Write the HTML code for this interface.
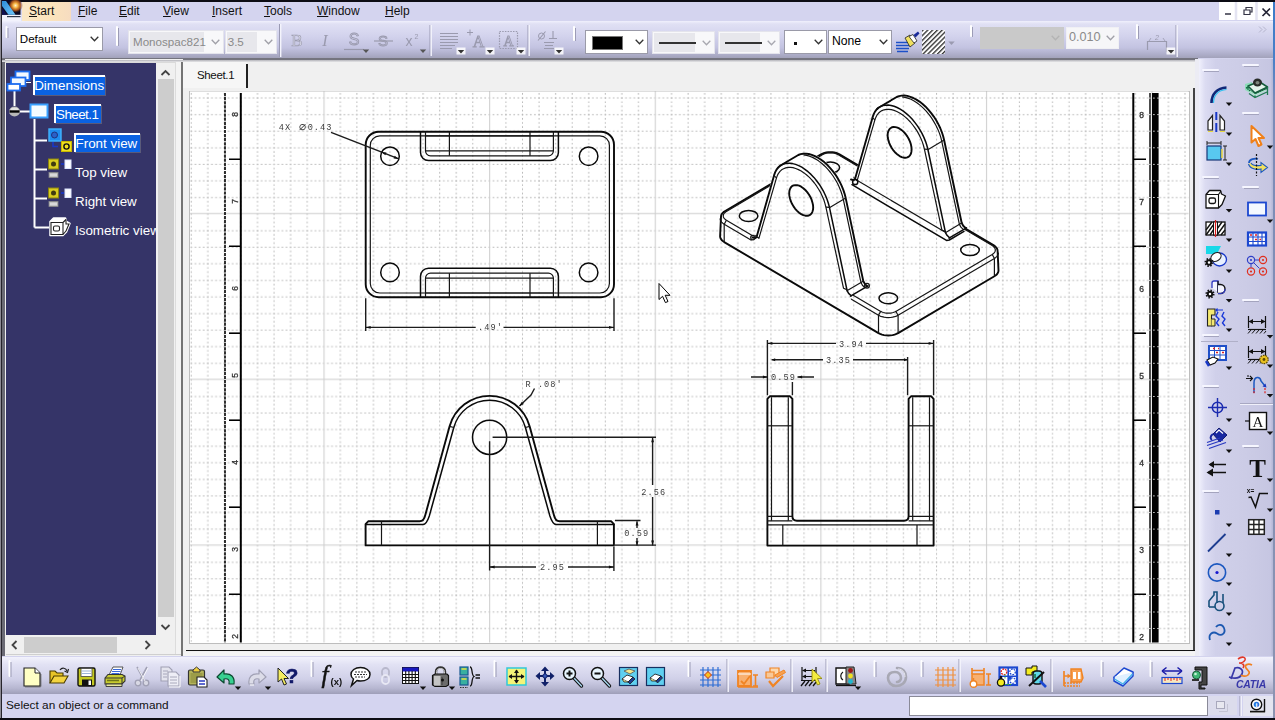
<!DOCTYPE html><html><head><meta charset="utf-8"><title>CATIA V5 - Drawing</title><style>
html,body{margin:0;padding:0}
body{width:1275px;height:720px;overflow:hidden;position:relative;background:#d3d3ee;font-family:"Liberation Sans",sans-serif;font-size:13px;color:#000}
.a{position:absolute}
#menubar{left:2px;top:2px;width:1273px;height:19px;background:#d4d4ef}
#menubar span.m{position:absolute;top:2px;font-size:12px;line-height:15px;color:#111}
#menubar u{text-decoration:underline;text-underline-offset:1px}
#tb{left:2px;top:21px;width:1273px;height:37px;background:linear-gradient(#f0f0fc 0,#e0e0f4 8%,#d3d3ed 40%,#c3c3e1 72%,#b0b0cc 88%,#a2a2ba 100%)}
#tbline{left:2px;top:57.5px;width:1196px;height:2px;background:#74747e}
.cb{position:absolute;box-sizing:border-box;border:1px solid #9a9aa8;background:#fff;font-size:13px;line-height:20px;white-space:nowrap;overflow:hidden}
.cb.dis{background:#f8f8fa;border-color:#e4e4ec;color:#8a8a8a}
.chev{position:absolute;right:5px;top:7px;width:9px;height:6px}
.grip{position:absolute;width:2px;background:#fff;box-shadow:1px 1px 0 #9090a8;border-radius:1px}
.hgrip{position:absolute;height:2px;background:#f4f4fc;box-shadow:1px 1px 0 #a0a0b8;border-radius:1px}
#tree{left:6px;top:63px;width:150px;height:572px;background:#353468;overflow:hidden}
#tree .t{position:absolute;color:#fff;font-size:13.4px;line-height:18px;white-space:nowrap}
#tree .sel{position:absolute;background:#0a62e2;border-top:2px solid #fff;border-left:2px solid #fff;box-sizing:border-box;box-shadow:1px 1px 0 #5a5a7a}
.sb{background:#f0f0f0}
.thumb{background:#cdcdcd}
#tabs{left:183px;top:62px;width:1012px;height:590px;background:#f0f0f0}
.dm{font-family:"Liberation Mono",monospace;font-size:8.6px;fill:#3c3c3c;letter-spacing:1.05px}
.dia{font-family:"DejaVu Sans Mono","Liberation Mono",monospace;font-size:12px;letter-spacing:0}
.rl{font-family:"Liberation Sans",sans-serif;font-size:8.5px;fill:#333;stroke:#333;stroke-width:.3}
.gd{stroke:#b9b9b9;stroke-width:1;fill:none}
.gm{stroke:#cdcdcd;stroke-width:1;fill:none}
.ol{stroke:#0a0a0a;stroke-width:1.9;fill:none;stroke-linejoin:round;stroke-linecap:round}
.ml{stroke:#0a0a0a;stroke-width:1.5;fill:none;stroke-linejoin:round;stroke-linecap:round}
.tl{stroke:#151515;stroke-width:1.2;fill:none;stroke-linejoin:round}
.dl{stroke:#1c1c1c;stroke-width:1.4;fill:none}
.fl{fill:url(#gr);stroke:url(#gr);stroke-width:.6;stroke-linejoin:round}
#status{left:2px;top:694px;width:1273px;height:24px;background:#d4d4f0}
#btb{left:2px;top:657px;width:1273px;height:37px;background:linear-gradient(#f2f2fc 0,#e2e2f4 20%,#d0d0e8 60%,#b6b6d0 85%,#9e9eb8 100%)}
#rtb{left:1199px;top:59px;width:76px;height:597px;background:linear-gradient(90deg,#f0f0fc 0,#dcdcf2 8%,#d0d0ea 22%,#ccccE6 60%,#c6c6e2 94%,#a4aacc 100%)}
</style></head><body>
<div class="a" style="left:0;top:0;width:1275px;height:2px;background:#0c0c14"></div>
<div class="a" style="left:0;top:0;width:1px;height:720px;background:#8c8a94"></div><div class="a" style="left:1px;top:0;width:1px;height:720px;background:#26242c"></div>
<div class="a" style="left:0;top:718px;width:1275px;height:2px;background:#0c0c14"></div>
<div id="menubar" class="a">
<div class="a" style="left:19.500px;top:-.5px;width:49px;height:19px;background:linear-gradient(90deg,#fbe8c6,#fbe3bc 60%,#f6dcc0)"></div>

<span class="m" style="left:27px"><u>S</u>tart</span>
<span class="m" style="left:76px"><u>F</u>ile</span>
<span class="m" style="left:117px"><u>E</u>dit</span>
<span class="m" style="left:161px"><u>V</u>iew</span>
<span class="m" style="left:210px"><u>I</u>nsert</span>
<span class="m" style="left:262px"><u>T</u>ools</span>
<span class="m" style="left:315px"><u>W</u>indow</span>
<span class="m" style="left:383px"><u>H</u>elp</span>
<div class="a" style="left:1217px;top:0;width:56px;height:18px;background:#fff"></div>
<svg class="a" style="left:1217px;top:0" width="56" height="18" viewBox="0 0 56 18"><path d="M17 0V18M37.500 0V18" stroke="#e4e4f2" stroke-width="2.500"/><path d="M6 12H12" stroke="#334" stroke-width="1.500"/><path d="M25 8H31V12.500H25ZM27 8V5.500H33V10H31" fill="none" stroke="#334" stroke-width="1.200"/><path d="M43.500 6.500L51 14M51 6.500L43.500 14" stroke="#223" stroke-width="1.700"/></svg>
</div>
<div id="tb" class="a">
<div class="cb" style="left:14px;top:5.5px;width:87px;height:24px;line-height:21px;padding-left:2.8px;font-size:11.6px;"><span style="position:relative">Default</span><svg style="position:absolute;right:3px;top:8.5px;width:9px;height:6px" viewBox="0 0 9 6"><path d="M0.7 0.8L4.5 4.8L8.3 0.8" fill="none" stroke="#333" stroke-width="1.3"/></svg></div>
<div class="cb dis" style="left:125.5px;top:8.5px;width:96px;height:24px;line-height:21px;padding-left:4.5px;font-size:11.6px;"><span style="position:absolute;left:1px;top:1px;bottom:1px;right:19px;background:#e7e7ec"></span><span style="position:relative">Monospac821</span><svg style="position:absolute;right:3px;top:8.5px;width:9px;height:6px" viewBox="0 0 9 6"><path d="M0.7 0.8L4.5 4.8L8.3 0.8" fill="none" stroke="#a0a0a8" stroke-width="1.3"/></svg></div>
<div class="cb dis" style="left:222.7px;top:8.5px;width:52.5px;height:24px;line-height:21px;padding-left:2px;font-size:11.6px;"><span style="position:absolute;left:1px;top:1px;bottom:1px;right:19px;background:#e7e7ec"></span><span style="position:relative">3.5</span><svg style="position:absolute;right:3px;top:8.5px;width:9px;height:6px" viewBox="0 0 9 6"><path d="M0.7 0.8L4.5 4.8L8.3 0.8" fill="none" stroke="#a0a0a8" stroke-width="1.3"/></svg></div>
<div class="cb" style="left:583px;top:8.5px;width:63px;height:24.5px;line-height:21.5px;padding-left:4px;font-size:11.6px;"><span style="position:absolute;left:6px;top:5px;width:31px;height:14px;background:#000;border:1px solid #777;box-sizing:border-box"></span><svg style="position:absolute;right:3px;top:8.75px;width:9px;height:6px" viewBox="0 0 9 6"><path d="M0.7 0.8L4.5 4.8L8.3 0.8" fill="none" stroke="#333" stroke-width="1.3"/></svg></div>
<div class="cb dis" style="left:650px;top:10px;width:63px;height:23px;line-height:20px;padding-left:4px;font-size:11.6px;"><span style="position:absolute;left:1px;top:1px;bottom:1px;right:19px;background:#e7e7ec"></span><span style="position:absolute;left:6px;top:10px;width:37px;height:1.5px;background:#333"></span><svg style="position:absolute;right:3px;top:8.0px;width:9px;height:6px" viewBox="0 0 9 6"><path d="M0.7 0.8L4.5 4.8L8.3 0.8" fill="none" stroke="#a8a8b0" stroke-width="1.3"/></svg></div>
<div class="cb dis" style="left:716px;top:10px;width:62px;height:23px;line-height:20px;padding-left:4px;font-size:11.6px;"><span style="position:absolute;left:1px;top:1px;bottom:1px;right:19px;background:#e7e7ec"></span><span style="position:absolute;left:6px;top:10px;width:37px;height:1.5px;background:#333"></span><svg style="position:absolute;right:3px;top:8.0px;width:9px;height:6px" viewBox="0 0 9 6"><path d="M0.7 0.8L4.5 4.8L8.3 0.8" fill="none" stroke="#a8a8b0" stroke-width="1.3"/></svg></div>
<div class="cb" style="left:782px;top:8.5px;width:43px;height:24.5px;line-height:21.5px;padding-left:4px;font-size:11.6px;"><span style="position:absolute;left:9px;top:11px;width:3px;height:3px;background:#111"></span><svg style="position:absolute;right:3px;top:8.75px;width:9px;height:6px" viewBox="0 0 9 6"><path d="M0.7 0.8L4.5 4.8L8.3 0.8" fill="none" stroke="#333" stroke-width="1.3"/></svg></div>
<div class="cb" style="left:826px;top:8.5px;width:64px;height:24px;line-height:21px;padding-left:3px;font-size:12.2px;"><span style="position:relative">None</span><svg style="position:absolute;right:3px;top:8.5px;width:9px;height:6px" viewBox="0 0 9 6"><path d="M0.7 0.8L4.5 4.8L8.3 0.8" fill="none" stroke="#333" stroke-width="1.3"/></svg></div>
<div class="cb dis" style="left:978px;top:5.5px;width:84px;height:22px;line-height:19px;padding-left:4px;font-size:11.6px;background:#c9c9c9;border-color:#c9c9c9;"><span style="position:relative"></span><svg style="position:absolute;right:3px;top:7.5px;width:9px;height:6px" viewBox="0 0 9 6"><path d="M0.7 0.8L4.5 4.8L8.3 0.8" fill="none" stroke="#b4b4b4" stroke-width="1.3"/></svg></div>
<div class="cb dis" style="left:1064px;top:5.5px;width:53px;height:22px;line-height:19px;padding-left:2px;font-size:12.6px;background:#f6f6f8;border-color:#f0f0f4;"><span style="position:relative"><span style="display:inline-block;width:32px;overflow:hidden;vertical-align:top">0.0100</span></span><svg style="position:absolute;right:3px;top:7.5px;width:9px;height:6px" viewBox="0 0 9 6"><path d="M0.7 0.8L4.5 4.8L8.3 0.8" fill="none" stroke="#a0a0a8" stroke-width="1.3"/></svg></div>
</div>
<div id="tbline" class="a"></div>
<div class="a" style="left:2px;top:59px;width:181px;height:597px;background:#f0f0f0"></div>
<div class="a" style="left:2px;top:59px;width:3px;height:597px;background:#6a6a74"></div>
<div class="a" style="left:5px;top:62px;width:171px;height:1px;background:#dadada"></div>
<div id="tree" class="a">
<div class="sel" style="left:27px;top:12px;width:72px;height:20px"></div>
<div class="t" style="left:28.200000000000003px;top:13.5px">Dimensions</div>
<div class="sel" style="left:47.5px;top:41px;width:47px;height:19px"></div>
<div class="t" style="left:50px;top:42.5px"><span style="letter-spacing:-.55px">Sheet.1</span></div>
<div class="sel" style="left:67.5px;top:70px;width:66px;height:19px"></div>
<div class="t" style="left:69.5px;top:71.5px">Front view</div>
<div class="t" style="left:69px;top:100.5px">Top view</div>
<div class="t" style="left:69px;top:129.5px">Right view</div>
<div class="t" style="left:69px;top:158.5px">Isometric view</div>
</div>
<div class="a sb" style="left:156px;top:63px;width:19px;height:572px"></div>
<div class="a thumb" style="left:157.500px;top:79px;width:16px;height:538px"></div>
<svg class="a" style="left:156px;top:63px" width="19" height="572"><path d="M5.5 12L9.5 8L13.5 12" fill="none" stroke="#444" stroke-width="1.8"/><path d="M5.5 562L9.5 566L13.5 562" fill="none" stroke="#444" stroke-width="1.8"/></svg>
<div class="a sb" style="left:6px;top:636px;width:169px;height:18px"></div>
<div class="a thumb" style="left:24px;top:637px;width:93px;height:16px"></div>
<svg class="a" style="left:6px;top:636px" width="169" height="18"><path d="M10.5 5L6.5 9L10.5 13" fill="none" stroke="#444" stroke-width="1.8"/><path d="M139.5 5L143.5 9L139.5 13" fill="none" stroke="#444" stroke-width="1.8"/></svg>
<div class="a" style="left:175px;top:62px;width:1px;height:593px;background:#dcdcdc"></div>
<div class="a" style="left:176px;top:62px;width:5px;height:593px;background:#f3f3f3"></div><div class="a" style="left:6px;top:654px;width:176px;height:1px;background:#cfcfcf"></div>
<div class="a" style="left:181px;top:62px;width:1.500px;height:593.500px;background:#747474"></div>
<div id="tabs" class="a"></div>
<div class="a" style="left:183px;top:62px;width:64px;height:26px;background:#f6f6f6"></div>
<div class="a" style="left:197px;top:68px;font-size:11.5px;letter-spacing:-.35px;line-height:15px;color:#111">Sheet.1</div>
<div class="a" style="left:246px;top:64px;width:2px;height:24px;background:#222"></div>
<div class="a" style="left:2px;top:59.500px;width:1196px;height:2.500px;background:linear-gradient(#b4b4ba,#e6e6e8)"></div>
<div class="a" style="left:189px;top:90.500px;width:1000.500px;height:553px;background:#bdbdbd"></div>
<div class="a" style="left:190px;top:91.500px;width:998.500px;height:551px;background:#fff"></div>
<div class="a" style="left:186px;top:649.500px;width:1010px;height:1.600px;background:#111"></div>
<div class="a" style="left:1193px;top:88px;width:2px;height:562px;background:#444"></div>
<div class="a" style="left:183px;top:652px;width:1016px;height:4px;background:#f4f4f4"></div>
<div class="a" style="left:1195px;top:59px;width:4px;height:597px;background:#ececf4"></div>
<svg class="a" style="left:0;top:0;will-change:transform" width="1275" height="720" viewBox="0 0 1275 720">
<clipPath id="cp"><rect x="190" y="91.500" width="998.500" height="551"/></clipPath><g clip-path="url(#cp)">
<defs><pattern id="gr" patternUnits="userSpaceOnUse" x="315.469" y="205.811" width="165.625" height="165.780">
<rect width="166.62" height="166.78" fill="#fff"/>
<path d="M24.84 0V165.78" class="gd" stroke-dasharray="1.7 2.444" stroke-dashoffset="0.850"/>
<path d="M0 24.87H165.62" class="gd" stroke-dasharray="1.7 2.441" stroke-dashoffset="0.850"/>
<path d="M41.41 0V165.78" class="gd" stroke-dasharray="1.7 2.444" stroke-dashoffset="0.850"/>
<path d="M0 41.45H165.62" class="gd" stroke-dasharray="1.7 2.441" stroke-dashoffset="0.850"/>
<path d="M57.97 0V165.78" class="gd" stroke-dasharray="1.7 2.444" stroke-dashoffset="0.850"/>
<path d="M0 58.02H165.62" class="gd" stroke-dasharray="1.7 2.441" stroke-dashoffset="0.850"/>
<path d="M74.53 0V165.78" class="gd" stroke-dasharray="1.7 2.444" stroke-dashoffset="0.850"/>
<path d="M0 74.60H165.62" class="gd" stroke-dasharray="1.7 2.441" stroke-dashoffset="0.850"/>
<path d="M91.09 0V165.78" class="gd" stroke-dasharray="1.7 2.444" stroke-dashoffset="0.850"/>
<path d="M0 91.18H165.62" class="gd" stroke-dasharray="1.7 2.441" stroke-dashoffset="0.850"/>
<path d="M107.66 0V165.78" class="gd" stroke-dasharray="1.7 2.444" stroke-dashoffset="0.850"/>
<path d="M0 107.76H165.62" class="gd" stroke-dasharray="1.7 2.441" stroke-dashoffset="0.850"/>
<path d="M124.22 0V165.78" class="gd" stroke-dasharray="1.7 2.444" stroke-dashoffset="0.850"/>
<path d="M0 124.33H165.62" class="gd" stroke-dasharray="1.7 2.441" stroke-dashoffset="0.850"/>
<path d="M140.78 0V165.78" class="gd" stroke-dasharray="1.7 2.444" stroke-dashoffset="0.850"/>
<path d="M0 140.91H165.62" class="gd" stroke-dasharray="1.7 2.441" stroke-dashoffset="0.850"/>
<path d="M157.34 0V165.78" class="gd" stroke-dasharray="1.7 2.444" stroke-dashoffset="0.850"/>
<path d="M0 157.49H165.62" class="gd" stroke-dasharray="1.7 2.441" stroke-dashoffset="0.850"/>
<path d="M8.59 0V165.78" class="gm"/><path d="M0 7.64H165.62" class="gm"/>
</pattern></defs>
<rect x="190" y="91" width="999" height="553" fill="url(#gr)"/>
<path d="M225 93V644" stroke="#000" stroke-width="1.6" stroke-dasharray="3.2 0.9" fill="none"/>
<path d="M240.8 93V644" stroke="#000" stroke-width="2" fill="none"/>
<path d="M1133.3 93V644" stroke="#000" stroke-width="2" fill="none"/>
<path d="M1150 93V644" stroke="#000" stroke-width="1.4" fill="none"/>
<path d="M1155.3 93V644" stroke="#000" stroke-width="6.6" fill="none"/>
<path d="M1149 98.1H1159" stroke="#fff" stroke-width="1" stroke-dasharray="1.6 2.5" fill="none" opacity=".8"/>
<path d="M1149 114.6H1159" stroke="#fff" stroke-width="1" stroke-dasharray="1.6 2.5" fill="none" opacity=".8"/>
<path d="M1149 131.2H1159" stroke="#fff" stroke-width="1" stroke-dasharray="1.6 2.5" fill="none" opacity=".8"/>
<path d="M1149 147.8H1159" stroke="#fff" stroke-width="1" stroke-dasharray="1.6 2.5" fill="none" opacity=".8"/>
<path d="M1149 164.4H1159" stroke="#fff" stroke-width="1" stroke-dasharray="1.6 2.5" fill="none" opacity=".8"/>
<path d="M1149 180.9H1159" stroke="#fff" stroke-width="1" stroke-dasharray="1.6 2.5" fill="none" opacity=".8"/>
<path d="M1149 197.5H1159" stroke="#fff" stroke-width="1" stroke-dasharray="1.6 2.5" fill="none" opacity=".8"/>
<path d="M1149 214.1H1159" stroke="#fff" stroke-width="1" stroke-dasharray="1.6 2.5" fill="none" opacity=".8"/>
<path d="M1149 230.7H1159" stroke="#fff" stroke-width="1" stroke-dasharray="1.6 2.5" fill="none" opacity=".8"/>
<path d="M1149 247.3H1159" stroke="#fff" stroke-width="1" stroke-dasharray="1.6 2.5" fill="none" opacity=".8"/>
<path d="M1149 263.8H1159" stroke="#fff" stroke-width="1" stroke-dasharray="1.6 2.5" fill="none" opacity=".8"/>
<path d="M1149 280.4H1159" stroke="#fff" stroke-width="1" stroke-dasharray="1.6 2.5" fill="none" opacity=".8"/>
<path d="M1149 297H1159" stroke="#fff" stroke-width="1" stroke-dasharray="1.6 2.5" fill="none" opacity=".8"/>
<path d="M1149 313.6H1159" stroke="#fff" stroke-width="1" stroke-dasharray="1.6 2.5" fill="none" opacity=".8"/>
<path d="M1149 330.1H1159" stroke="#fff" stroke-width="1" stroke-dasharray="1.6 2.5" fill="none" opacity=".8"/>
<path d="M1149 346.7H1159" stroke="#fff" stroke-width="1" stroke-dasharray="1.6 2.5" fill="none" opacity=".8"/>
<path d="M1149 363.3H1159" stroke="#fff" stroke-width="1" stroke-dasharray="1.6 2.5" fill="none" opacity=".8"/>
<path d="M1149 379.9H1159" stroke="#fff" stroke-width="1" stroke-dasharray="1.6 2.5" fill="none" opacity=".8"/>
<path d="M1149 396.5H1159" stroke="#fff" stroke-width="1" stroke-dasharray="1.6 2.5" fill="none" opacity=".8"/>
<path d="M1149 413H1159" stroke="#fff" stroke-width="1" stroke-dasharray="1.6 2.5" fill="none" opacity=".8"/>
<path d="M1149 429.6H1159" stroke="#fff" stroke-width="1" stroke-dasharray="1.6 2.5" fill="none" opacity=".8"/>
<path d="M1149 446.2H1159" stroke="#fff" stroke-width="1" stroke-dasharray="1.6 2.5" fill="none" opacity=".8"/>
<path d="M1149 462.8H1159" stroke="#fff" stroke-width="1" stroke-dasharray="1.6 2.5" fill="none" opacity=".8"/>
<path d="M1149 479.3H1159" stroke="#fff" stroke-width="1" stroke-dasharray="1.6 2.5" fill="none" opacity=".8"/>
<path d="M1149 495.9H1159" stroke="#fff" stroke-width="1" stroke-dasharray="1.6 2.5" fill="none" opacity=".8"/>
<path d="M1149 512.5H1159" stroke="#fff" stroke-width="1" stroke-dasharray="1.6 2.5" fill="none" opacity=".8"/>
<path d="M1149 529.1H1159" stroke="#fff" stroke-width="1" stroke-dasharray="1.6 2.5" fill="none" opacity=".8"/>
<path d="M1149 545.7H1159" stroke="#fff" stroke-width="1" stroke-dasharray="1.6 2.5" fill="none" opacity=".8"/>
<path d="M1149 562.2H1159" stroke="#fff" stroke-width="1" stroke-dasharray="1.6 2.5" fill="none" opacity=".8"/>
<path d="M1149 578.8H1159" stroke="#fff" stroke-width="1" stroke-dasharray="1.6 2.5" fill="none" opacity=".8"/>
<path d="M1149 595.4H1159" stroke="#fff" stroke-width="1" stroke-dasharray="1.6 2.5" fill="none" opacity=".8"/>
<path d="M1149 612H1159" stroke="#fff" stroke-width="1" stroke-dasharray="1.6 2.5" fill="none" opacity=".8"/>
<path d="M1149 628.5H1159" stroke="#fff" stroke-width="1" stroke-dasharray="1.6 2.5" fill="none" opacity=".8"/>
<path d="M229 159.2H241" stroke="#000" stroke-width="1.6"/>
<path d="M1133 159.2H1146" stroke="#000" stroke-width="1.6"/>
<path d="M229 246.2H241" stroke="#000" stroke-width="1.6"/>
<path d="M1133 246.2H1146" stroke="#000" stroke-width="1.6"/>
<path d="M229 333.2H241" stroke="#000" stroke-width="1.6"/>
<path d="M1133 333.2H1146" stroke="#000" stroke-width="1.6"/>
<path d="M229 420.2H241" stroke="#000" stroke-width="1.6"/>
<path d="M1133 420.2H1146" stroke="#000" stroke-width="1.6"/>
<path d="M229 507.2H241" stroke="#000" stroke-width="1.6"/>
<path d="M1133 507.2H1146" stroke="#000" stroke-width="1.6"/>
<path d="M229 594.2H241" stroke="#000" stroke-width="1.6"/>
<path d="M1133 594.2H1146" stroke="#000" stroke-width="1.6"/>
<text class="rl" transform="translate(237.5 114.5) rotate(-90)" text-anchor="middle">8</text>
<text class="rl" x="1141.5" y="117.7" text-anchor="middle">8</text>
<text class="rl" transform="translate(237.5 201.5) rotate(-90)" text-anchor="middle">7</text>
<text class="rl" x="1141.5" y="204.7" text-anchor="middle">7</text>
<text class="rl" transform="translate(237.5 288.5) rotate(-90)" text-anchor="middle">6</text>
<text class="rl" x="1141.5" y="291.7" text-anchor="middle">6</text>
<text class="rl" transform="translate(237.5 375.5) rotate(-90)" text-anchor="middle">5</text>
<text class="rl" x="1141.5" y="378.7" text-anchor="middle">5</text>
<text class="rl" transform="translate(237.5 462.5) rotate(-90)" text-anchor="middle">4</text>
<text class="rl" x="1141.5" y="465.7" text-anchor="middle">4</text>
<text class="rl" transform="translate(237.5 549.5) rotate(-90)" text-anchor="middle">3</text>
<text class="rl" x="1141.5" y="552.7" text-anchor="middle">3</text>
<text class="rl" transform="translate(237.5 636.5) rotate(-90)" text-anchor="middle">2</text>
<text class="rl" x="1141.5" y="639.7" text-anchor="middle">2</text>
<path class="ol" d="M378.7 131.7H601A13 13 0 0 1 614 144.7V284.2A13 13 0 0 1 601 297.2H378.7A13 13 0 0 1 365.7 284.2V144.7A13 13 0 0 1 378.7 131.7Z"/>
<path class="tl" d="M379.8 135.9H599.9A9.5 9.5 0 0 1 609.4 145.4V283.5A9.5 9.5 0 0 1 599.9 293H379.8A9.5 9.5 0 0 1 370.3 283.5V145.4A9.5 9.5 0 0 1 379.8 135.9Z"/>
<circle class="ml" cx="390" cy="156.2" r="9.3"/>
<circle class="ml" cx="390" cy="272.4" r="9.3"/>
<circle class="ml" cx="588.6" cy="156.2" r="9.3"/>
<circle class="ml" cx="588.6" cy="272.4" r="9.3"/>
<path class="ml" d="M420.5 131.7V152.6A8 8 0 0 0 428.5 160.6H550.4A8 8 0 0 0 558.4 152.6V131.7"/>
<path class="tl" d="M425.5 131.7V150.8A5 5 0 0 0 430.5 155.8H548.4A5 5 0 0 0 553.4 150.8V131.7"/>
<path class="tl" d="M425.5 150.8H553.4"/>
<path class="tl" d="M425.5 135.9H553.4"/>
<path class="tl" d="M449.4 131.7V155.8"/>
<path class="tl" d="M530 131.7V155.8"/>
<path class="ml" d="M420.5 297.2V276.2A8 8 0 0 1 428.5 268.2H550.4A8 8 0 0 1 558.4 276.2V297.2"/>
<path class="tl" d="M425.5 297.2V278.2A5 5 0 0 1 430.5 273.2H548.4A5 5 0 0 1 553.4 278.2V297.2"/>
<path class="tl" d="M425.5 278.2H553.4"/>
<path class="tl" d="M425.5 293H553.4"/>
<path class="tl" d="M449.4 297.2V273.2"/>
<path class="tl" d="M530 297.2V273.2"/>
<path class="dl" d="M365.7 298.2V331M614 298.2V331"/>
<path class="dl" d="M365.7 327.4H475.7M503.5 327.4H614"/>
<path d="M365.7 327.4L370.7 326L370.7 328.8Z" fill="#111"/>
<path d="M614 327.4L609 328.8L609 326Z" fill="#111"/>
<text class="dm" x="490.5" y="330.4" text-anchor="middle">.49'</text>
<text class="dm" x="278.8" y="130.4" text-anchor="start">4X <tspan class="dia" dx="1.5" dy="0.8">⌀</tspan><tspan dx="1.5" dy="-0.8">0.43</tspan></text>
<path class="dl" d="M331 132.4L398.8 158.9"/>
<path d="M381.3 152.1L386.5 152.6L385.4 155.2Z" fill="#111"/>
<path d="M398.8 158.9L393.6 158.4L394.7 155.8Z" fill="#111"/>
<path class="ol" d="M368.2 521.3H419.6Q423.9 521.3 425.3 515L449.6 426.3A41.5 41.5 0 0 1 529.6 426.3L553.9 515Q555.3 521.3 559.6 521.3H611.3L613.9 524.1V545.4H365.6V524.1Z"/>
<path class="ml" d="M365.6 524.5H423Q426.5 524.5 429.3 516L453.8 427.5A37.1 37.1 0 0 1 525.4 427.5L549.9 516Q552.7 524.5 556.2 524.5H613.9"/>
<path class="tl" d="M381.5 521.3V545.4M597.4 521.3V545.4"/>
<path class="tl" d="M449.6 426.3L453.8 427.5M529.6 426.3L525.4 427.5"/>
<circle class="ml" cx="489.6" cy="437.3" r="17.1"/>
<path class="dl" d="M489.6 441.3V570.5M492.6 437.3H656"/>
<path class="dl" d="M652.6 437.3V545.4"/>
<path d="M652.6 437.3L654 442.3L651.2 442.3Z" fill="#111"/>
<path d="M652.6 545.4L651.2 540.4L654 540.4Z" fill="#111"/>
<rect x="640" y="485" width="27" height="12" fill="url(#gr)"/>
<text class="dm" x="653.7" y="494.5" text-anchor="middle">2.56</text>
<path class="dl" d="M614.9 520.5H640.5M614.9 545.1H656"/>
<path class="dl" d="M637 521.3V545.4"/>
<path d="M637 521.3L638.4 525.5L635.6 525.5Z" fill="#111"/>
<path d="M637 545.4L635.6 541.2L638.4 541.2Z" fill="#111"/>
<rect x="623" y="528" width="27" height="10" fill="url(#gr)"/>
<text class="dm" x="636.7" y="536.1" text-anchor="middle">0.59</text>
<path class="dl" d="M613.9 546.4V571"/>
<path class="dl" d="M489.6 567H536M568 567H613.9"/>
<path d="M489.6 567L494.6 565.6L494.6 568.4Z" fill="#111"/>
<path d="M613.9 567L608.9 568.4L608.9 565.6Z" fill="#111"/>
<text class="dm" x="552.5" y="570.4" text-anchor="middle">2.95</text>
<text class="dm" x="525.5" y="386.5" text-anchor="start">R .08'</text>
<path class="dl" d="M534.5 388.5L531 395L519.5 406"/>
<path d="M519.2 406.3L521.8 401.8L523.8 403.9Z" fill="#111"/>
<path class="ol" d="M767.4 545.6V398.8L770 396.2H789.8L792.4 398.8V516.3Q792.4 520.8 796.9 520.8H904.1Q908.6 520.8 908.6 516.3V398.8L911.2 396.2H931L933.6 398.8V545.6Z"/>
<path class="tl" d="M771.5 397.2V520.8M788.3 397.2V520.8"/>
<path class="tl" d="M767.4 425.8H792.4"/>
<path class="tl" d="M767.4 516.3H792.4"/>
<path class="tl" d="M912.7 397.2V520.8M929.5 397.2V520.8"/>
<path class="tl" d="M908.6 425.8H933.6"/>
<path class="tl" d="M908.6 516.3H933.6"/>
<path class="tl" d="M767.4 520.8H792.4M908.6 520.8H933.6"/>
<path class="tl" d="M767.4 524.9H933.6"/>
<path class="tl" d="M782.8 524.9V545.6M917 524.9V545.6"/>
<path class="dl" d="M767.4 395.2V340M933.6 395.2V340"/>
<path class="dl" d="M767.4 343.4H836M866 343.4H933.6"/>
<path d="M767.4 343.4L772.4 342L772.4 344.8Z" fill="#111"/>
<path d="M933.6 343.4L928.6 344.8L928.6 342Z" fill="#111"/>
<text class="dm" x="851.5" y="346.8" text-anchor="middle">3.94</text>
<path class="dl" d="M771.6 359.8H823M853 359.8H907.6"/>
<path d="M771.6 359.8L775.2 358.3L775.2 361.3Z" fill="#111"/>
<path d="M907.6 359.8L904 361.3L904 358.3Z" fill="#111"/>
<path class="dl" d="M907.6 357V395.2"/>
<text class="dm" x="838.5" y="363.2" text-anchor="middle">3.35</text>
<path class="dl" d="M751 377H767.4M797.5 377H814M792.4 374V395.2"/>
<path d="M767.4 377L762.9 378.4L762.9 375.6Z" fill="#111"/>
<path d="M797.6 377L802.1 375.6L802.1 378.4Z" fill="#111"/>
<rect x="770" y="371" width="26" height="11" fill="url(#gr)"/>
<text class="dm" x="783.5" y="380.4" text-anchor="middle">0.59</text>
<defs><style>mask path{fill:#000;stroke:#000;stroke-width:.7}</style><mask id="mk1" maskUnits="userSpaceOnUse" x="690" y="80" width="340" height="280"><rect x="690" y="80" width="340" height="280" fill="#fff"/><path d="M850.3 179.9 L850.3 179.9 L852.9 180.5 L854.3 179.5 L872 117.3 L873 114.5 L874.3 112 L875.9 109.9 L877.7 108.2 L879.9 106.9 L882.3 106 L884.8 105.5 L887.6 105.5 L890.5 105.8 L893.5 106.7 L896.5 107.9 L899.6 109.5 L902.7 111.6 L905.8 113.9 L908.8 116.7 L911.7 119.7 L914.4 123 L917 126.5 L919.4 130.2 L921.5 134 L923.4 138 L925 141.9 L926.3 145.9 L927.3 149.9 L944.9 232.9 L946.4 235.6 L949 238.1 L949 238.1Z"/><path d="M867.8 169.6 L870.4 170.1 L871.8 169.2 L889.5 106.9 L890.5 104.2 L891.8 101.7 L893.4 99.6 L895.2 97.9 L897.4 96.6 L899.8 95.7 L902.3 95.2 L905.1 95.1 L908 95.5 L911 96.3 L914 97.6 L917.1 99.2 L920.2 101.2 L923.3 103.6 L926.3 106.3 L929.2 109.4 L931.9 112.6 L934.5 116.1 L936.9 119.8 L939 123.7 L940.9 127.6 L942.5 131.6 L943.8 135.6 L944.8 139.6 L962.4 222.6 L963.9 225.3 L966.5 227.8Z"/><path d="M850.3 179.9 L852.9 180.5 L870.4 170.1 L867.8 169.6Z"/><path d="M852.9 180.5 L854.3 179.5 L871.8 169.2 L870.4 170.1Z"/><path d="M854.3 179.5 L872 117.3 L889.5 106.9 L871.8 169.2Z"/><path d="M872 117.3 L873 114.5 L890.5 104.2 L889.5 106.9Z"/><path d="M873 114.5 L874.3 112 L891.8 101.7 L890.5 104.2Z"/><path d="M874.3 112 L875.9 109.9 L893.4 99.6 L891.8 101.7Z"/><path d="M875.9 109.9 L877.7 108.2 L895.2 97.9 L893.4 99.6Z"/><path d="M877.7 108.2 L879.9 106.9 L897.4 96.6 L895.2 97.9Z"/><path d="M879.9 106.9 L882.3 106 L899.8 95.7 L897.4 96.6Z"/><path d="M882.3 106 L884.8 105.5 L902.3 95.2 L899.8 95.7Z"/><path d="M884.8 105.5 L887.6 105.5 L905.1 95.1 L902.3 95.2Z"/><path d="M887.6 105.5 L890.5 105.8 L908 95.5 L905.1 95.1Z"/><path d="M890.5 105.8 L893.5 106.7 L911 96.3 L908 95.5Z"/><path d="M893.5 106.7 L896.5 107.9 L914 97.6 L911 96.3Z"/><path d="M896.5 107.9 L899.6 109.5 L917.1 99.2 L914 97.6Z"/><path d="M899.6 109.5 L902.7 111.6 L920.2 101.2 L917.1 99.2Z"/><path d="M902.7 111.6 L905.8 113.9 L923.3 103.6 L920.2 101.2Z"/><path d="M905.8 113.9 L908.8 116.7 L926.3 106.3 L923.3 103.6Z"/><path d="M908.8 116.7 L911.7 119.7 L929.2 109.4 L926.3 106.3Z"/><path d="M911.7 119.7 L914.4 123 L931.9 112.6 L929.2 109.4Z"/><path d="M914.4 123 L917 126.5 L934.5 116.1 L931.9 112.6Z"/><path d="M917 126.5 L919.4 130.2 L936.9 119.8 L934.5 116.1Z"/><path d="M919.4 130.2 L921.5 134 L939 123.7 L936.9 119.8Z"/><path d="M921.5 134 L923.4 138 L940.9 127.6 L939 123.7Z"/><path d="M923.4 138 L925 141.9 L942.5 131.6 L940.9 127.6Z"/><path d="M925 141.9 L926.3 145.9 L943.8 135.6 L942.5 131.6Z"/><path d="M926.3 145.9 L927.3 149.9 L944.8 139.6 L943.8 135.6Z"/><path d="M927.3 149.9 L944.9 232.9 L962.4 222.6 L944.8 139.6Z"/><path d="M944.9 232.9 L946.4 235.6 L963.9 225.3 L962.4 222.6Z"/><path d="M946.4 235.6 L949 238.1 L966.5 227.8 L963.9 225.3Z"/><path d="M751.9 245.2 L751.9 238 L754.4 238.5 L755.9 237.6 L773.5 175.3 L774.5 172.6 L775.8 170.1 L777.4 168 L779.3 166.3 L781.5 165 L783.8 164.1 L786.4 163.6 L789.2 163.5 L792 163.9 L795 164.7 L798.1 166 L801.2 167.6 L804.3 169.6 L807.4 172 L810.4 174.7 L813.2 177.7 L816 181 L818.6 184.5 L820.9 188.2 L823.1 192.1 L825 196 L826.6 200 L827.9 204 L828.9 208 L846.5 291 L848 293.7 L850.5 296.2 L850.5 303.4Z"/><path d="M769.4 227.6 L771.9 228.2 L773.4 227.2 L791 165 L792 162.2 L793.3 159.8 L794.9 157.7 L796.8 155.9 L799 154.6 L801.3 153.7 L803.9 153.2 L806.7 153.2 L809.5 153.6 L812.5 154.4 L815.6 155.6 L818.7 157.3 L821.8 159.3 L824.9 161.7 L827.9 164.4 L830.7 167.4 L833.5 170.7 L836.1 174.2 L838.4 177.9 L840.6 181.8 L842.5 185.7 L844.1 189.7 L845.4 193.7 L846.4 197.6 L864 280.7 L865.5 283.4 L868 285.9Z"/><path d="M751.9 238 L754.4 238.5 L771.9 228.2 L769.4 227.6Z"/><path d="M754.4 238.5 L755.9 237.6 L773.4 227.2 L771.9 228.2Z"/><path d="M755.9 237.6 L773.5 175.3 L791 165 L773.4 227.2Z"/><path d="M773.5 175.3 L774.5 172.6 L792 162.2 L791 165Z"/><path d="M774.5 172.6 L775.8 170.1 L793.3 159.8 L792 162.2Z"/><path d="M775.8 170.1 L777.4 168 L794.9 157.7 L793.3 159.8Z"/><path d="M777.4 168 L779.3 166.3 L796.8 155.9 L794.9 157.7Z"/><path d="M779.3 166.3 L781.5 165 L799 154.6 L796.8 155.9Z"/><path d="M781.5 165 L783.8 164.1 L801.3 153.7 L799 154.6Z"/><path d="M783.8 164.1 L786.4 163.6 L803.9 153.2 L801.3 153.7Z"/><path d="M786.4 163.6 L789.2 163.5 L806.7 153.2 L803.9 153.2Z"/><path d="M789.2 163.5 L792 163.9 L809.5 153.6 L806.7 153.2Z"/><path d="M792 163.9 L795 164.7 L812.5 154.4 L809.5 153.6Z"/><path d="M795 164.7 L798.1 166 L815.6 155.6 L812.5 154.4Z"/><path d="M798.1 166 L801.2 167.6 L818.7 157.3 L815.6 155.6Z"/><path d="M801.2 167.6 L804.3 169.6 L821.8 159.3 L818.7 157.3Z"/><path d="M804.3 169.6 L807.4 172 L824.9 161.7 L821.8 159.3Z"/><path d="M807.4 172 L810.4 174.7 L827.9 164.4 L824.9 161.7Z"/><path d="M810.4 174.7 L813.2 177.7 L830.7 167.4 L827.9 164.4Z"/><path d="M813.2 177.7 L816 181 L833.5 170.7 L830.7 167.4Z"/><path d="M816 181 L818.6 184.5 L836.1 174.2 L833.5 170.7Z"/><path d="M818.6 184.5 L820.9 188.2 L838.4 177.9 L836.1 174.2Z"/><path d="M820.9 188.2 L823.1 192.1 L840.6 181.8 L838.4 177.9Z"/><path d="M823.1 192.1 L825 196 L842.5 185.7 L840.6 181.8Z"/><path d="M825 196 L826.6 200 L844.1 189.7 L842.5 185.7Z"/><path d="M826.6 200 L827.9 204 L845.4 193.7 L844.1 189.7Z"/><path d="M827.9 204 L828.9 208 L846.4 197.6 L845.4 193.7Z"/><path d="M828.9 208 L846.5 291 L864 280.7 L846.4 197.6Z"/><path d="M846.5 291 L848 293.7 L865.5 283.4 L864 280.7Z"/><path d="M848 293.7 L850.5 296.2 L868 285.9 L865.5 283.4Z"/></mask>
<mask id="mk2" maskUnits="userSpaceOnUse" x="690" y="80" width="340" height="280"><rect x="690" y="80" width="340" height="280" fill="#fff"/><path d="M751.9 245.2 L751.9 238 L754.4 238.5 L755.9 237.6 L773.5 175.3 L774.5 172.6 L775.8 170.1 L777.4 168 L779.3 166.3 L781.5 165 L783.8 164.1 L786.4 163.6 L789.2 163.5 L792 163.9 L795 164.7 L798.1 166 L801.2 167.6 L804.3 169.6 L807.4 172 L810.4 174.7 L813.2 177.7 L816 181 L818.6 184.5 L820.9 188.2 L823.1 192.1 L825 196 L826.6 200 L827.9 204 L828.9 208 L846.5 291 L848 293.7 L850.5 296.2 L850.5 303.4Z"/><path d="M769.4 227.6 L771.9 228.2 L773.4 227.2 L791 165 L792 162.2 L793.3 159.8 L794.9 157.7 L796.8 155.9 L799 154.6 L801.3 153.7 L803.9 153.2 L806.7 153.2 L809.5 153.6 L812.5 154.4 L815.6 155.6 L818.7 157.3 L821.8 159.3 L824.9 161.7 L827.9 164.4 L830.7 167.4 L833.5 170.7 L836.1 174.2 L838.4 177.9 L840.6 181.8 L842.5 185.7 L844.1 189.7 L845.4 193.7 L846.4 197.6 L864 280.7 L865.5 283.4 L868 285.9Z"/><path d="M751.9 238 L754.4 238.5 L771.9 228.2 L769.4 227.6Z"/><path d="M754.4 238.5 L755.9 237.6 L773.4 227.2 L771.9 228.2Z"/><path d="M755.9 237.6 L773.5 175.3 L791 165 L773.4 227.2Z"/><path d="M773.5 175.3 L774.5 172.6 L792 162.2 L791 165Z"/><path d="M774.5 172.6 L775.8 170.1 L793.3 159.8 L792 162.2Z"/><path d="M775.8 170.1 L777.4 168 L794.9 157.7 L793.3 159.8Z"/><path d="M777.4 168 L779.3 166.3 L796.8 155.9 L794.9 157.7Z"/><path d="M779.3 166.3 L781.5 165 L799 154.6 L796.8 155.9Z"/><path d="M781.5 165 L783.8 164.1 L801.3 153.7 L799 154.6Z"/><path d="M783.8 164.1 L786.4 163.6 L803.9 153.2 L801.3 153.7Z"/><path d="M786.4 163.6 L789.2 163.5 L806.7 153.2 L803.9 153.2Z"/><path d="M789.2 163.5 L792 163.9 L809.5 153.6 L806.7 153.2Z"/><path d="M792 163.9 L795 164.7 L812.5 154.4 L809.5 153.6Z"/><path d="M795 164.7 L798.1 166 L815.6 155.6 L812.5 154.4Z"/><path d="M798.1 166 L801.2 167.6 L818.7 157.3 L815.6 155.6Z"/><path d="M801.2 167.6 L804.3 169.6 L821.8 159.3 L818.7 157.3Z"/><path d="M804.3 169.6 L807.4 172 L824.9 161.7 L821.8 159.3Z"/><path d="M807.4 172 L810.4 174.7 L827.9 164.4 L824.9 161.7Z"/><path d="M810.4 174.7 L813.2 177.7 L830.7 167.4 L827.9 164.4Z"/><path d="M813.2 177.7 L816 181 L833.5 170.7 L830.7 167.4Z"/><path d="M816 181 L818.6 184.5 L836.1 174.2 L833.5 170.7Z"/><path d="M818.6 184.5 L820.9 188.2 L838.4 177.9 L836.1 174.2Z"/><path d="M820.9 188.2 L823.1 192.1 L840.6 181.8 L838.4 177.9Z"/><path d="M823.1 192.1 L825 196 L842.5 185.7 L840.6 181.8Z"/><path d="M825 196 L826.6 200 L844.1 189.7 L842.5 185.7Z"/><path d="M826.6 200 L827.9 204 L845.4 193.7 L844.1 189.7Z"/><path d="M827.9 204 L828.9 208 L846.4 197.6 L845.4 193.7Z"/><path d="M828.9 208 L846.5 291 L864 280.7 L846.4 197.6Z"/><path d="M846.5 291 L848 293.7 L865.5 283.4 L864 280.7Z"/><path d="M848 293.7 L850.5 296.2 L868 285.9 L865.5 283.4Z"/></mask></defs>
<g mask="url(#mk1)"><path class="ol" d="M720.1 236.3 L721 216.6 L721.2 215.4 L721.7 214.2 L722.5 213.1 L723.5 212.1 L724.8 211.2 L821.1 154.4 L822.7 153.6 L824.4 152.9 L826.3 152.5 L828.3 152.2 L830.3 152.1 L832.4 152.2 L834.3 152.5 L836.2 152.9 L837.9 153.6 L839.5 154.4 L993.8 245.4 L995.1 246.3 L996.1 247.3 L996.9 248.4 L997.4 249.6 L997.6 250.8 L998.5 270.5 L998.3 271.8 L997.8 273 L997 274.2 L995.8 275.3 L994.4 276.3 L898.1 333.1 L896.4 333.9 L894.6 334.6 L892.6 335.1 L890.5 335.4 L888.3 335.5 L886.1 335.4 L884 335.1 L882 334.6 L880.1 333.9 L878.5 333.1 L724.2 242.1 L722.8 241.1 L721.6 240 L720.8 238.8 L720.3 237.6Z"/>
<path class="tl" d="M880.7 311.4 L882 312 L883.4 312.5 L885 312.9 L886.6 313.1 L888.3 313.2 L890 313.1 L891.6 312.9 L893.1 312.5 L894.6 312 L895.8 311.4 L992.2 254.5 L993.2 253.8 L994.1 252.9 L994.8 252 L995.2 251.1 L995.3 250.1 L995.2 249.1 L994.8 248.1 L994.1 247.2 L993.2 246.4 L992.2 245.6 L837.9 154.6 L836.6 153.9 L835.2 153.4 L833.6 153 L832 152.8 L830.3 152.7 L828.6 152.8 L827 153 L825.5 153.4 L824 153.9 L822.8 154.6 L726.4 211.4 L725.4 212.2 L724.5 213 L723.8 213.9 L723.4 214.9 L723.3 215.9 L723.4 216.9 L723.8 217.8 L724.5 218.7 L725.4 219.6 L726.4 220.3Z"/>
<path class="tl" d="M720.1 218.4 L720.3 219.7 L720.8 221 L721.7 222.1 L722.8 223.2 L724.2 224.2 L878.5 315.2 L880.1 316.1 L882 316.7 L884 317.2 L886.1 317.5 L888.3 317.6 L890.4 317.5 L892.6 317.2 L894.6 316.7 L896.4 316.1 L898.1 315.2 L994.4 258.4 L995.8 257.4 L996.9 256.3 L997.8 255.2 L998.3 253.9 L998.5 252.6"/>
<path class="tl" d="M724.2 242.1 L724.2 224.2"/>
<path class="tl" d="M878.5 333.1 L878.5 315.2"/>
<path class="tl" d="M898.1 333.1 L898.1 315.2"/>
<path class="tl" d="M994.4 276.3 L994.4 258.4"/>
<path class="tl" d="M878.5 315.2 L880.7 311.4"/>
<path class="tl" d="M898.1 315.2 L895.8 311.4"/>
<path class="tl" d="M724.2 224.2 L726.4 220.3"/>
<path class="tl" d="M994.4 258.4 L992.2 254.5"/>
<ellipse class="ml" cx="748.6" cy="215.9" rx="9.3" ry="5.5"/>
<ellipse class="ml" cx="888.3" cy="298.3" rx="9.3" ry="5.5"/>
<ellipse class="ml" cx="830.3" cy="167.6" rx="9.3" ry="5.5"/>
<ellipse class="ml" cx="970" cy="250.1" rx="9.3" ry="5.5"/></g>
<g mask="url(#mk2)"><path class="ol" d="M851 179.5 L853.6 180.1 L855 179.1 L872.7 116.9 L873.7 114.1 L875 111.6 L876.6 109.5 L878.4 107.8 L880.6 106.5 L896.7 97 L899.1 96.1 L901.6 95.6 L904.4 95.5 L907.3 95.9 L910.3 96.8 L913.3 98 L916.4 99.6 L919.5 101.6 L922.6 104 L925.6 106.7 L928.5 109.8 L931.2 113.1 L933.8 116.6 L936.2 120.3 L938.3 124.1 L940.2 128 L941.8 132 L943.1 136 L944.1 140 L961.7 223 L963.2 225.7 L965.8 228.2"/>
<path class="ml" d="M876.5 109.6 L878.4 107.9 L880.5 106.5 L882.9 105.6 L885.4 105.2 L888.2 105.1 L891.1 105.5 L894.1 106.3 L897.1 107.5 L900.2 109.2 L903.3 111.2 L906.4 113.6 L909.4 116.3 L912.3 119.3 L915 122.6 L917.6 126.1 L920 129.8 L922.1 133.7 L924 137.6 L925.6 141.6 L926.9 145.6 L927.9 149.5 L945.5 232.6 L947 235.3 L949.6 237.8"/>
<path class="tl" d="M853.5 177.4 L857.3 180.2 L874.9 119.9 L875.8 117.4 L876.9 115.2 L878.4 113.3 L880.1 111.8 L882 110.6 L884.1 109.8 L886.4 109.4 L888.8 109.3 L891.4 109.7 L894.1 110.4 L896.8 111.5 L899.6 113 L902.4 114.8 L905.1 116.9 L907.8 119.3 L910.4 122 L912.8 125 L915.1 128.1 L917.3 131.4 L919.2 134.9 L920.9 138.4 L922.3 141.9 L923.5 145.5 L924.4 149.1 L941.9 230.1 L945.8 231.8"/>
<path class="tl" d="M902.1 96.9 L904.9 97.3 L907.9 98.1 L911 99.3 L914.1 101 L917.2 103 L920.3 105.4 L923.3 108.1 L926.2 111.1 L928.9 114.4 L931.5 117.9 L933.8 121.6 L936 125.5 L937.9 129.4 L939.5 133.4 L940.8 137.4 L941.8 141.3 L959.4 224.4 L960.9 227.1 L963.5 229.6"/>
<path class="tl" d="M924.4 149.1 L928.2 149.4 L944.1 140"/>
<path class="tl" d="M944.9 232.9 L962.4 222.6"/>
<path class="ml" d="M949 238.1 L966.5 227.8"/>
<path class="tl" d="M872 117.3 L874.9 119.9"/>
<path class="ol" d="M911.6 149.4 L911.4 147 L910.9 144.3 L910 141.6 L908.8 139 L907.3 136.4 L905.6 134 L903.7 131.9 L901.7 130.1 L899.6 128.7 L897.5 127.7 L895.5 127.1 L893.6 127 L891.9 127.3 L890.5 128.2 L889.3 129.4 L888.4 131.1 L887.8 133 L887.6 135.3 L887.8 137.8 L888.4 140.4 L889.3 143.1 L890.5 145.8 L891.9 148.3 L893.6 150.7 L895.5 152.8 L897.5 154.6 L899.6 156.1 L901.7 157.1 L903.7 157.7 L905.6 157.8 L907.3 157.4 L908.8 156.6 L910 155.3 L910.9 153.7 L911.4 151.7Z"/>
<path class="ml" d="M852 184.7 L946.5 240.4 L949.3 240 L964 231.3"/>
<path class="tl" d="M855.7 179.5 L944.9 232.1"/>
<circle class="ml" cx="855.2" cy="182" r="2.6"/></g>
<g><path class="ol" d="M752.5 237.6 L755.1 238.1 L756.6 237.1 L774.2 174.9 L775.2 172.1 L776.5 169.7 L778.1 167.6 L780 165.9 L782.2 164.5 L798.3 155 L800.6 154.1 L803.2 153.7 L806 153.6 L808.8 154 L811.8 154.8 L814.9 156.1 L818 157.7 L821.1 159.7 L824.2 162.1 L827.2 164.8 L830 167.8 L832.8 171.1 L835.4 174.6 L837.7 178.3 L839.9 182.2 L841.8 186.1 L843.4 190.1 L844.7 194.1 L845.7 198.1 L863.3 281.1 L864.8 283.8 L867.3 286.3"/>
<path class="ml" d="M778 167.6 L779.9 165.9 L782.1 164.6 L784.4 163.7 L787 163.2 L789.8 163.2 L792.6 163.6 L795.6 164.4 L798.7 165.6 L801.8 167.2 L804.9 169.3 L808 171.7 L811 174.4 L813.9 177.4 L816.6 180.7 L819.2 184.2 L821.5 187.9 L823.7 191.7 L825.6 195.7 L827.2 199.7 L828.5 203.7 L829.5 207.6 L847.1 290.6 L848.6 293.4 L851.2 295.8"/>
<path class="tl" d="M755 235.4 L758.9 238.3 L776.5 177.9 L777.4 175.4 L778.5 173.3 L780 171.4 L781.6 169.8 L783.6 168.7 L785.7 167.9 L788 167.4 L790.4 167.4 L793 167.7 L795.7 168.5 L798.4 169.6 L801.2 171 L804 172.9 L806.7 175 L809.4 177.4 L812 180.1 L814.4 183 L816.7 186.2 L818.8 189.5 L820.8 192.9 L822.4 196.4 L823.9 200 L825 203.6 L825.9 207.1 L843.5 288.2 L847.4 289.9"/>
<path class="tl" d="M803.6 155 L806.5 155.4 L809.5 156.2 L812.6 157.4 L815.7 159.1 L818.8 161.1 L821.9 163.5 L824.9 166.2 L827.7 169.2 L830.5 172.5 L833.1 176 L835.4 179.7 L837.6 183.5 L839.4 187.5 L841 191.5 L842.3 195.5 L843.3 199.4 L861 282.5 L862.4 285.2 L865 287.7"/>
<path class="tl" d="M825.9 207.1 L829.8 207.4 L845.7 198.1"/>
<path class="tl" d="M846.5 291 L864 280.7"/>
<path class="ml" d="M850.5 296.2 L868 285.9"/>
<path class="tl" d="M773.5 175.3 L776.5 177.9"/>
<path class="ol" d="M813.2 207.5 L813 205 L812.4 202.4 L811.6 199.7 L810.4 197 L808.9 194.5 L807.2 192.1 L805.3 190 L803.3 188.2 L801.2 186.7 L799.1 185.7 L797.1 185.2 L795.2 185.1 L793.5 185.4 L792 186.2 L790.8 187.5 L790 189.1 L789.4 191.1 L789.2 193.4 L789.4 195.9 L790 198.5 L790.8 201.2 L792 203.8 L793.5 206.4 L795.2 208.8 L797.1 210.9 L799.1 212.7 L801.2 214.1 L803.3 215.2 L805.3 215.7 L807.2 215.8 L808.9 215.5 L810.4 214.7 L811.6 213.4 L812.4 211.8 L813 209.8Z"/>
<circle class="tl" cx="752.9" cy="237.6" r="2.2"/>
<circle class="tl" cx="867" cy="285.7" r="2.4"/></g>
<path d="M659 283.5V299.5L662.6 296.3L665.4 302.6L668 301.5L665.2 295.3H670Z" fill="#fff" stroke="#000" stroke-width="1" stroke-linejoin="miter"/>
</g></svg>
<div id="rtb" class="a">

</div>
<div id="btb" class="a">

</div>
<div id="status" class="a"><div class="a" style="left:4px;top:4px;font-size:11.8px;line-height:15px;color:#111">Select an object or a command</div>
<div class="a" style="left:907px;top:2px;width:299px;height:20px;background:#fff;border:1px solid #8a8a98;box-sizing:border-box"></div>

</div>
<svg class="a" style="left:0;top:0" width="1275" height="720" viewBox="0 0 1275 720">
<defs><radialGradient id="og" cx="13.500" cy="5.500" r="7.500" gradientUnits="userSpaceOnUse"><stop offset="0" stop-color="#fff4d0"/><stop offset=".3" stop-color="#f8b848"/><stop offset=".65" stop-color="#d06818" stop-opacity=".8"/><stop offset="1" stop-color="#602000" stop-opacity="0"/></radialGradient><linearGradient id="bg" x1="0" y1="0" x2="1" y2="1"><stop offset="0" stop-color="#2c8cd8"/><stop offset="1" stop-color="#70c8fc"/></linearGradient></defs>
<rect x="2" y="15" width="19.500" height="6" fill="#f2f2fc"/>
<g transform="translate(2 0)" ><rect width="18.500" height="14.800" fill="#0a0a26"/><circle cx="13.500" cy="5.500" r="7.500" fill="url(#og)"/><path d="M0 1L4 1L13.500 14.800L6.500 14.800L0 6Z" fill="url(#bg)"/><path d="M0 8L5 14.800H0Z" fill="#101050"/></g>
<path d="M7 16.600H20.500" stroke="#30384c" stroke-width="1.200"/>
<path d="M6.5 27V37" stroke="#fff" stroke-width="2" stroke-linecap="round"/><path d="M8.0 28V38" stroke="#9c9cb6" stroke-width="1"/>
<path d="M117 27V45" stroke="#fff" stroke-width="2" stroke-linecap="round"/><path d="M118.5 28V46" stroke="#9c9cb6" stroke-width="1"/>
<text x="297" y="46" text-anchor="middle" font-family="Liberation Serif,serif" font-size="17" fill="#e4e4f0" stroke="#9c9cb0" stroke-width=".7">B</text>
<text x="325" y="46" text-anchor="middle" font-family="Liberation Serif,serif" font-style="italic" font-size="16" fill="#9a9aae">I</text>
<text x="354" y="45" text-anchor="middle" font-family="Liberation Sans,sans-serif" font-size="16" fill="none" stroke="#9a9aae" stroke-width=".9">S</text><path d="M344 49.5H364" stroke="#9a9aae" stroke-width="1.2"/>
<text x="383" y="46" text-anchor="middle" font-family="Liberation Sans,sans-serif" font-size="15" fill="none" stroke="#9a9aae" stroke-width=".9">S</text><path d="M374 41H393" stroke="#9a9aae" stroke-width="1.2"/>
<text x="409" y="46" text-anchor="middle" font-family="Liberation Sans,sans-serif" font-size="14" fill="#9a9aae">x</text><text x="416.5" y="39" text-anchor="middle" font-family="Liberation Sans,sans-serif" font-size="7" fill="#9a9aae">2</text>
<path d="M362.8 49.4h6.4l-3.2 3.6z" fill="#555"/>
<path d="M419.8 49.4h6.4l-3.2 3.6z" fill="#555"/>
<path d="M279.5 24V57" stroke="#9a9ab4" stroke-width="1"/><path d="M280.7 24V57" stroke="#f4f4fc" stroke-width="1.4"/>
<path d="M430 25V56" stroke="#9a9ab4" stroke-width="1"/><path d="M431.2 25V56" stroke="#f4f4fc" stroke-width="1.4"/>
<path d="M440 33.500H458M440 36.500H458M440 39.500H458M440 42.500H458M440 45.500H455M440 48.500H452" stroke="#9a9aae" stroke-width="1"/>
<g transform="translate(461 47)" ><rect x="-4.500" y="0.500" width="9" height="7" fill="#fff" opacity=".85"/></g><path d="M457.8 49.9h6.4l-3.2 3.6z" fill="#333"/>
<text x="478.500" y="47" text-anchor="middle" font-family="Liberation Serif,serif" font-size="16" fill="none" stroke="#9a9aae" stroke-width=".8">A</text><path d="M467 32.500H473M470 29.500V35.500" stroke="#9a9aae" stroke-width="1"/>
<g transform="translate(490 47)" ><rect x="-4.500" y="0.500" width="9" height="7" fill="#fff" opacity=".85"/></g><path d="M486.8 49.9h6.4l-3.2 3.6z" fill="#333"/>
<rect x="499.500" y="31.500" width="18" height="17" fill="none" stroke="#9a9aae" stroke-width="1.2" stroke-dasharray="1.5 1.2"/><text x="508.500" y="46" text-anchor="middle" font-family="Liberation Serif,serif" font-size="14" fill="none" stroke="#9a9aae" stroke-width=".8">A</text>
<g transform="translate(521 47)" ><rect x="-4.500" y="0.500" width="9" height="7" fill="#fff" opacity=".85"/></g><path d="M517.8 49.9h6.4l-3.2 3.6z" fill="#333"/>
<path d="M528 25V56" stroke="#9a9ab4" stroke-width="1"/><path d="M529.2 25V56" stroke="#f4f4fc" stroke-width="1.4"/>
<circle cx="541.500" cy="36" r="3" fill="none" stroke="#9a9aae"/><path d="M538 40.500L545.500 31.500M549 38.500H557M553 31V38.500M544 42.500H554M545 45.500H553M544 48.500H554" stroke="#9a9aae" stroke-width="1.1" fill="none"/>
<g transform="translate(559 47)" ><rect x="-4.500" y="0.500" width="9" height="7" fill="#fff" opacity=".85"/></g><path d="M555.8 49.9h6.4l-3.2 3.6z" fill="#333"/>
<path d="M574 27V40" stroke="#fff" stroke-width="2" stroke-linecap="round"/><path d="M575.5 28V41" stroke="#9c9cb6" stroke-width="1"/>
<g transform="translate(896 29)" ><path d="M0 13.500H12M0 16.500H13M0 19.500H13M1 22.500H12" stroke="#1c50c8" stroke-width="1.3"/><path d="M9 9L14 6L19 14L14 18Z" fill="#f0e060" stroke="#222" stroke-width=".8"/><path d="M13 7.500L17 5.500L21 12L18 14Z" fill="#fff" stroke="#222" stroke-width=".8"/><path d="M17.500 6L22 2.500L23.500 4.500L19.500 8.500Z" fill="#1a2a9a"/></g>
<defs><pattern id="hh" patternUnits="userSpaceOnUse" width="3.400" height="3.400" patternTransform="rotate(-45)"><rect width="3.400" height="3.400" fill="#fff"/><rect width="3.400" height="1.350" fill="#333"/></pattern></defs>
<rect x="922" y="30" width="23" height="24" fill="url(#hh)"/>
<path d="M948.3 41.4h6.4l-3.2 3.6z" fill="#9a9ab0"/>
<path d="M971 26V36" stroke="#fff" stroke-width="2" stroke-linecap="round"/><path d="M972.5 27V37" stroke="#9c9cb6" stroke-width="1"/>
<path d="M1137 25V38" stroke="#fff" stroke-width="2" stroke-linecap="round"/><path d="M1138.5 26V39" stroke="#9c9cb6" stroke-width="1"/>
<path d="M1147.500 50V41.500H1166.500V52" fill="none" stroke="#9a9aae" stroke-width="1.200"/><path d="M1149 41L1151 38M1165 41L1163 38" stroke="#9a9aae" stroke-width=".8"/><text x="1157" y="39.500" text-anchor="middle" font-family="Liberation Sans,sans-serif" font-style="italic" font-size="7" fill="#9a9aae">2</text>
<g transform="translate(1171 47)" ><rect x="-4.500" y="0.500" width="9" height="7" fill="#fff" opacity=".85"/></g><path d="M1167.8 49.9h6.4l-3.2 3.6z" fill="#333"/>
<path d="M1176 25V57" stroke="#9a9ab4" stroke-width="1"/><path d="M1177.2 25V57" stroke="#f4f4fc" stroke-width="1.4"/>
<path d="M1259 26.500L1262 29.500L1259 32.500M1263 26.500L1266 29.500L1263 32.500" fill="none" stroke="#b4b4cc" stroke-width="1"/>
<path d="M14.500 91V106M19 111.500H30M34.500 119V227.500M34.500 140.500H47M34.500 169.500H47M34.500 198.500H47M34.500 227.500H49" stroke="#fff" stroke-width="2" fill="none"/>
<g transform="translate(6 69)" ><rect x="9.500" y="2.500" width="14" height="8.500" fill="#f2f8ff" stroke="#1c6cf0" stroke-width="1.800"/><rect x="5" y="8.500" width="14.500" height="8.500" fill="#f2f8ff" stroke="#1c6cf0" stroke-width="1.800"/><rect x="1.500" y="15" width="12.500" height="6.500" fill="#fff" stroke="#1c6cf0" stroke-width="1.800"/><path d="M20 13.500H25" stroke="#fff" stroke-width="1"/></g>
<ellipse cx="14.500" cy="111.500" rx="5.500" ry="5" fill="#b8b8b8"/><ellipse cx="14.500" cy="109.500" rx="4" ry="2" fill="#e4e4e4"/><path d="M9.500 111.500H19.500" stroke="#000" stroke-width="2.400"/>
<rect x="30.500" y="104.500" width="17" height="13" fill="#fff" stroke="#38a0ff" stroke-width="2"/><rect x="32" y="106" width="14" height="9" fill="#f4fbff"/>
<rect x="49" y="129" width="12" height="12" fill="#1e8cf0" stroke="#40b4ff" stroke-width="1.400"/><circle cx="54.500" cy="135" r="3" fill="#2a60c8" stroke="#203080" stroke-width="1"/><path d="M53 142V146.500H58" stroke="#1838c8" stroke-width="1.600" fill="none"/><rect x="61.500" y="141.500" width="10" height="10" fill="#f0e020" stroke="#c8b800" stroke-width="1"/><circle cx="66.500" cy="146.500" r="2.600" fill="#f0e020" stroke="#111" stroke-width="1.400"/>
<g transform="translate(48 158.5)" ><rect x="0.500" y="0.500" width="10" height="10" fill="#d8cc20" stroke="#8c8410" stroke-width="1"/><circle cx="5.500" cy="5.500" r="2.500" fill="#403c10"/><rect x="1" y="14" width="9" height="5" fill="#c4c4c4" stroke="#888" stroke-width=".8"/><path d="M2 16.500H9" stroke="#eee" stroke-width="1"/><rect x="17" y="1.500" width="6" height="8.500" fill="#fff" stroke="#e0e8ff" stroke-width="1"/><path d="M13 5.500H16" stroke="#1838c8" stroke-width="1.600"/></g>
<g transform="translate(48 187.5)" ><rect x="0.500" y="0.500" width="10" height="10" fill="#d8cc20" stroke="#8c8410" stroke-width="1"/><circle cx="5.500" cy="5.500" r="2.500" fill="#403c10"/><rect x="1" y="14" width="9" height="5" fill="#c4c4c4" stroke="#888" stroke-width=".8"/><path d="M2 16.500H9" stroke="#eee" stroke-width="1"/><rect x="17" y="1.500" width="6" height="8.500" fill="#fff" stroke="#e0e8ff" stroke-width="1"/><path d="M13 5.500H16" stroke="#1838c8" stroke-width="1.600"/></g>
<g transform="translate(48.5 216)" ><path d="M1.500 5.500L5 2H17L18 5.500L21.500 7.500L18 16L14.500 19.500H1.500Z" fill="#fff" stroke="#fff" stroke-width="1.500" stroke-linejoin="round"/><path d="M2.500 6.500H14.500V18.500H2.500ZM14.500 6.500L17.500 3.500M14.500 18.500L17.500 15" fill="none" stroke="#222" stroke-width="1.100"/><rect x="5" y="10" width="6" height="5" rx="1.500" fill="none" stroke="#222" stroke-width="1.100"/><path d="M17.500 3.500V8L20.500 8L17.500 15" fill="none" stroke="#222" stroke-width="1.100"/></g>
<path d="M1203 70H1218" stroke="#f6f6ff" stroke-width="2" stroke-linecap="round"/><path d="M1204 71.5H1219" stroke="#a4a4be" stroke-width="1"/>
<path d="M1203 177H1218" stroke="#f6f6ff" stroke-width="2" stroke-linecap="round"/><path d="M1204 178.5H1219" stroke="#a4a4be" stroke-width="1"/>
<path d="M1203 335H1218" stroke="#f6f6ff" stroke-width="2" stroke-linecap="round"/><path d="M1204 336.5H1219" stroke="#a4a4be" stroke-width="1"/>
<path d="M1203 386H1218" stroke="#f6f6ff" stroke-width="2" stroke-linecap="round"/><path d="M1204 387.5H1219" stroke="#a4a4be" stroke-width="1"/>
<path d="M1203 491H1218" stroke="#f6f6ff" stroke-width="2" stroke-linecap="round"/><path d="M1204 492.5H1219" stroke="#a4a4be" stroke-width="1"/>
<path d="M1243 65H1258" stroke="#f6f6ff" stroke-width="2" stroke-linecap="round"/><path d="M1244 66.5H1259" stroke="#a4a4be" stroke-width="1"/>
<path d="M1243 113H1258" stroke="#f6f6ff" stroke-width="2" stroke-linecap="round"/><path d="M1244 114.5H1259" stroke="#a4a4be" stroke-width="1"/>
<path d="M1243 187H1258" stroke="#f6f6ff" stroke-width="2" stroke-linecap="round"/><path d="M1244 188.5H1259" stroke="#a4a4be" stroke-width="1"/>
<path d="M1243 300H1258" stroke="#f6f6ff" stroke-width="2" stroke-linecap="round"/><path d="M1244 301.5H1259" stroke="#a4a4be" stroke-width="1"/>
<path d="M1243 446H1258" stroke="#f6f6ff" stroke-width="2" stroke-linecap="round"/><path d="M1244 447.5H1259" stroke="#a4a4be" stroke-width="1"/>
<path d="M1240 403.500H1275" stroke="#a8a8c2" stroke-width="1"/><path d="M1240 404.500H1275" stroke="#f0f0fa" stroke-width="1"/>
<path d="M1201 341.500H1238" stroke="#b0b0c8" stroke-width="1"/>
<path d="M1211.500 103C1211.500 94 1217 88 1226.500 87.500" fill="none" stroke="#102878" stroke-width="2.600"/><path d="M1213.500 103C1213.500 95.500 1218 90 1226.500 89.500" fill="none" stroke="#30c0f0" stroke-width="1.200"/>
<path d="M1225.8 102.4h6.4l-3.2 3.6z" fill="#111"/>
<g transform="translate(1206 112)" ><path d="M2 18V9L6.500 3.500V18Z" fill="#fff" stroke="#222" stroke-width="1.200"/><path d="M18.500 18V9L14 3.500V18Z" fill="#fff" stroke="#222" stroke-width="1.200"/><path d="M10.300 0V8M10.300 11V20" stroke="#1838c8" stroke-width="2"/><path d="M2 19.500H7M14 19.500H19" stroke="#e8d840" stroke-width="1"/></g>
<path d="M1225.8 132.4h6.4l-3.2 3.6z" fill="#111"/>
<g transform="translate(1205 141)" ><rect x="2" y="5" width="14" height="14" fill="#58c8f0" stroke="#183878" stroke-width="1.200"/><path d="M2 0V4M16 0V4M2 2H16" stroke="#222" stroke-width="1"/><path d="M18 5H22M18 19H22M20 5V19" stroke="#222" stroke-width="1"/><path d="M17 8V17" stroke="#e8d840" stroke-width="1.500"/></g>
<path d="M1225.8 162.4h6.4l-3.2 3.6z" fill="#111"/>
<g transform="translate(1205 189)" ><path d="M1 5.500L4.500 1.500H15.500L16.500 5L20.500 7L17 15.500L13.500 19H1Z" fill="#fff" stroke="#111" stroke-width="1.300" stroke-linejoin="round"/><path d="M1 5.500H13.500V19M13.500 5.500L16 2" fill="none" stroke="#111" stroke-width="1.100"/><rect x="4" y="9" width="6.500" height="5.500" rx="1.800" fill="none" stroke="#111" stroke-width="1.300"/></g>
<path d="M1225.8 208.9h6.4l-3.2 3.6z" fill="#111"/>
<g transform="translate(1205 220)" ><rect x="1" y="2" width="19" height="13" fill="#fff" stroke="#111" stroke-width="1.300"/><path d="M1 10L7 2M1 15L9 4M5 15L9 9M12 15L20 4M12 9L17 2M16 15L20 10" stroke="#111" stroke-width="1.400"/><rect x="8.500" y="2" width="4" height="13" fill="#fff" stroke="#111" stroke-width="1"/><path d="M10.500 0V17" stroke="#d81818" stroke-width="1.200"/></g>
<path d="M1225.8 238.4h6.4l-3.2 3.6z" fill="#111"/>
<g transform="translate(1204 245)" ><path d="M2 1H17L13 9H2Z" fill="#18d8e8"/><ellipse cx="15.500" cy="14.500" rx="7" ry="6.500" fill="#e8f0ff" stroke="#1838c8" stroke-width="1.300"/><ellipse cx="12" cy="12" rx="5.500" ry="4" fill="#fff" stroke="#222" stroke-width="1" transform="rotate(-30 12 12)"/><circle cx="5" cy="17.500" r="3.700" fill="none" stroke="#111" stroke-width="1.700" stroke-dasharray="1.450 1.456"/><circle cx="5" cy="17.500" r="2.200" fill="#fff" stroke="#111" stroke-width="1.900"/></g>
<path d="M1225.8 269.4h6.4l-3.2 3.6z" fill="#111"/>
<g transform="translate(1205 279)" ><path d="M7 9V4Q7 2 9 2H13V13" fill="#f4f4ff" stroke="#3038c0" stroke-width="1.300"/><path d="M13 2V14" stroke="#111" stroke-width="1.300"/><path d="M13 5.500H15.500A4.500 4.500 0 0 1 15.500 14.500H13" fill="#f4f4ff" stroke="#111" stroke-width="1.400"/><path d="M13 14.500H16A4.500 4.500 0 0 0 20 10" fill="none" stroke="#3038c0" stroke-width="1.200"/><circle cx="5" cy="15" r="3.700" fill="none" stroke="#111" stroke-width="1.700" stroke-dasharray="1.450 1.456"/><circle cx="5" cy="15" r="2.200" fill="#fff" stroke="#111" stroke-width="1.900"/></g>
<path d="M1225.8 298.9h6.4l-3.2 3.6z" fill="#111"/>
<g transform="translate(1206 307)" ><path d="M1.500 2H9V8H5.500V19H1.500Z" fill="#f4e870" stroke="#222" stroke-width="1.100"/><path d="M5.500 12H9V19H5.500" fill="#f4e870" stroke="#222" stroke-width="1"/><path d="M12 5L10 9L13 12L10.500 16L13 19M18 5L16 9L19 12L16.500 16L19 19" fill="none" stroke="#1838d8" stroke-width="1.400"/><path d="M10 3H17M11.500 1.500L10 3L11.500 4.500" stroke="#1838d8" stroke-width="1.100" fill="none"/></g>
<path d="M1225.8 328.4h6.4l-3.2 3.6z" fill="#111"/>
<g transform="translate(1206 345)" ><rect x="3" y="1" width="17" height="14" fill="#fff" stroke="#2050c8" stroke-width="2"/><path d="M3 5.500H20M3 10H20M8.500 1V15M14 1V15" stroke="#2050c8" stroke-width="1"/><path d="M7 3.500H9M12 3.500H13M10 7.500H12M16 7.500H18" stroke="#e02020" stroke-width="1.500"/><path d="M1 15L7 12L12 14L9 18L4 20Z" fill="#fff" stroke="#111" stroke-width="1.100"/><path d="M0 16L3 21" stroke="#1838c8" stroke-width="2.500"/></g>
<path d="M1225.8 366.4h6.4l-3.2 3.6z" fill="#111"/>
<circle cx="1217.500" cy="407.500" r="5.200" fill="none" stroke="#1c2cb0" stroke-width="1.500"/><path d="M1217.500 398V417M1208 407.500H1227" stroke="#1c2cb0" stroke-width="1.400"/>
<path d="M1225.8 418.4h6.4l-3.2 3.6z" fill="#111"/>
<g transform="translate(1205 426)" ><path d="M8 8L14 2L22 9L15 16Z" fill="#1828a0" stroke="#101870" stroke-width="1"/><path d="M11 7L14 4L18 7.500" fill="none" stroke="#fff" stroke-width="1.200"/><path d="M8 8C5 10 5 13 7 14" fill="none" stroke="#1828a0" stroke-width="2"/><path d="M2 16.500L15 12M2 19.500L18 14M4 22.500L21 16.500" stroke="#2838c0" stroke-width="1.300"/></g>
<path d="M1225.8 449.4h6.4l-3.2 3.6z" fill="#111"/>
<path d="M1210 464.500H1226M1208 472.500H1226" stroke="#111" stroke-width="1.300"/><path d="M1214 461L1208.500 464.500L1214 468ZM1213 468.500L1206.500 472.500L1213 476.500Z" fill="#111"/>
<rect x="1215" y="510" width="4.500" height="4.500" fill="#1c3cb0"/>
<path d="M1225.8 523.4h6.4l-3.2 3.6z" fill="#111"/>
<path d="M1208 551.500L1225.500 534" stroke="#1c3c90" stroke-width="1.800"/>
<path d="M1225.8 553.4h6.4l-3.2 3.6z" fill="#111"/>
<circle cx="1217" cy="572.500" r="8.600" fill="none" stroke="#1c58c0" stroke-width="1.600"/><circle cx="1217" cy="572.500" r="1.600" fill="#1818d0"/>
<path d="M1225.8 582.4h6.4l-3.2 3.6z" fill="#111"/>
<g transform="translate(1207 591)" ><path d="M2 16V10L7 4V1H10V12" fill="none" stroke="#18507c" stroke-width="1.600"/><path d="M2 16H8" stroke="#18507c" stroke-width="1.600"/><circle cx="12.500" cy="15" r="4.500" fill="none" stroke="#18507c" stroke-width="1.600"/><path d="M16 3V12" stroke="#18507c" stroke-width="1.600"/></g>
<path d="M1225.8 612.4h6.4l-3.2 3.6z" fill="#111"/>
<path d="M1210 640C1208 634 1213 631 1217 633.500C1222 637 1226 633 1224 628C1222.500 624 1218 624 1216 627" fill="none" stroke="#1c58b0" stroke-width="1.800"/>
<path d="M1225.8 642.4h6.4l-3.2 3.6z" fill="#111"/>
<g transform="translate(1244 77)" ><path d="M1 7L8 5L9 17L1 13Z" fill="#8cdcb8"/><path d="M2 11L6 10" stroke="#186840" stroke-width="1.500"/><path d="M4 9L15 4.500L23.500 10L11 16Z" fill="#e4f4ec" stroke="#145c3c" stroke-width="1.500" stroke-linejoin="round"/><path d="M5 13L11 17L23 11.500" fill="none" stroke="#145c3c" stroke-width="1.300"/><path d="M4 9V13M11 16V21M23.500 10V18M5 16.500L11 20.500L23 15" fill="none" stroke="#1c7c50" stroke-width="1.300"/><path d="M6 14L11 18L22 13" fill="none" stroke="#a8e8c8" stroke-width="1.200"/><ellipse cx="13.500" cy="5.500" rx="4.500" ry="4" fill="#282c28"/><ellipse cx="13.500" cy="5.800" rx="2" ry="1.700" fill="#7c847c"/></g>
<g transform="translate(1249 125)" ><path d="M2.500 1V17.500L6.500 14L9.500 21L12.500 19.500L9.500 13H15Z" fill="#fff" stroke="#f08018" stroke-width="2" stroke-linejoin="round"/></g>
<path d="M1266.8 145.4h6.4l-3.2 3.6z" fill="#111"/>
<g transform="translate(1246 154)" ><path d="M3 9C3 5 9 4 12 5" fill="none" stroke="#1c58c0" stroke-width="1.800"/><path d="M2.500 10C4 15 11 16 15 15V18.500L21.500 13.500L15 8.500V11.500C10 12 6 11 5 9" fill="#f0e060" stroke="#1c58c0" stroke-width="1.100"/><path d="M10.500 0V22" stroke="#111" stroke-width="1.200" stroke-dasharray="2 1.500"/></g>
<rect x="1248" y="202.500" width="18" height="13" fill="#f4f8ff" stroke="#1c48d0" stroke-width="1.800"/>
<path d="M1266.8 219.4h6.4l-3.2 3.6z" fill="#111"/>
<rect x="1248" y="232.500" width="18" height="13" fill="#fff" stroke="#1c48d0" stroke-width="2.200"/><path d="M1248 237H1266M1248 241.500H1266M1253 233V246M1258 233V246M1262 233V246" stroke="#1c48d0" stroke-width="1.100"/><path d="M1250 235H1252M1255 235H1257M1255 239.500H1257M1259.500 239.500H1261" stroke="#e02020" stroke-width="1.600"/>
<circle cx="1251" cy="260" r="3.600" fill="none" stroke="#3040c8" stroke-width="1.200"/><circle cx="1251" cy="260" r="1.100" fill="#3040c8"/>
<circle cx="1263" cy="260" r="3.600" fill="none" stroke="#e03020" stroke-width="1.200"/><circle cx="1263" cy="260" r="1.100" fill="#e03020"/>
<circle cx="1251" cy="271.5" r="3.600" fill="none" stroke="#e03020" stroke-width="1.200"/><circle cx="1251" cy="271.5" r="1.100" fill="#e03020"/>
<circle cx="1263" cy="271.5" r="3.600" fill="none" stroke="#e03020" stroke-width="1.200"/><circle cx="1263" cy="271.5" r="1.100" fill="#e03020"/>
<path d="M1255 260H1259M1251 264V267.500M1254 263L1259.500 268.500" stroke="#3040c8" stroke-width="1"/>
<g transform="translate(1247 316)" ><path d="M1.500 0V12M18.500 0V12M2 5.500H18" stroke="#111" stroke-width="1.200"/><path d="M1.500 5.500L6 3V8ZM18.500 5.500L14 3V8Z" fill="#111"/><path d="M1 13.500H19" stroke="#111" stroke-width="1.200"/><path d="M1 17.500L4 14M5 17.500L8 14M9 17.500L12 14M13 17.500L16 14M17 17.500L19 15" stroke="#111" stroke-width="1"/></g>
<path d="M1266.8 334.9h6.4l-3.2 3.6z" fill="#111"/>
<g transform="translate(1247 346)" ><path d="M1.500 0V12M18.500 0V12M2 5.500H18" stroke="#111" stroke-width="1.200"/><path d="M1.500 5.500L6 3V8ZM18.500 5.500L14 3V8Z" fill="#111"/><path d="M1 13.500H19" stroke="#111" stroke-width="1.200"/><path d="M1 17.500L4 14M5 17.500L8 14M9 17.500L12 14M13 17.500L16 14M17 17.500L19 15" stroke="#111" stroke-width="1"/></g>
<circle cx="1264" cy="359.500" r="4.200" fill="#e8c020" stroke="#5c4800" stroke-width="1.200" stroke-dasharray="1.600 1"/><circle cx="1264" cy="359.500" r="1.400" fill="#5c4800"/>
<path d="M1266.8 364.4h6.4l-3.2 3.6z" fill="#111"/>
<g transform="translate(1245 373)" ><path d="M9 20V10C9 3 15 3 16 8L20 13" fill="none" stroke="#1c58c0" stroke-width="1.500"/><path d="M17.500 13.500L21.500 14.500L20.500 10.500Z" fill="#1c38c0"/><path d="M9 15V21M20 15V21" stroke="#e02020" stroke-width="1.200" stroke-dasharray="2 1.200"/><path d="M1 5.500H7M5 3L7.500 5.500L5 8" fill="none" stroke="#111" stroke-width="1.100"/><path d="M3 2V4" stroke="#111" stroke-width="1"/></g>
<path d="M1266.8 393.9h6.4l-3.2 3.6z" fill="#111"/>
<rect x="1249.500" y="412.500" width="17" height="17" fill="#fff" stroke="#111" stroke-width="1.400"/><path d="M1245 421H1249" stroke="#111" stroke-width="1.200"/><text x="1258" y="427" text-anchor="middle" font-family="Liberation Serif,serif" font-size="15" fill="#111">A</text>
<path d="M1266.8 431.4h6.4l-3.2 3.6z" fill="#111"/>
<text x="1257.500" y="476.500" text-anchor="middle" font-family="Liberation Serif,serif" font-weight="bold" font-size="25" fill="#111">T</text>
<path d="M1266.8 478.4h6.4l-3.2 3.6z" fill="#111"/>
<path d="M1248.500 497.500L1251 497L1255.500 507L1259.500 493.500H1268" fill="none" stroke="#111" stroke-width="1.500"/><text x="1250.500" y="493" text-anchor="middle" font-family="Liberation Sans,sans-serif" font-weight="bold" font-size="6.500" fill="#111">x=</text>
<path d="M1266.8 508.4h6.4l-3.2 3.6z" fill="#111"/>
<rect x="1248.700" y="519.700" width="15.600" height="14.600" fill="#fff" stroke="#222" stroke-width="1.500"/><path d="M1253.800 520V534M1259 520V534M1249 524.500H1264M1249 529.500H1264" stroke="#222" stroke-width="1.400"/>
<path d="M1266.8 538.4h6.4l-3.2 3.6z" fill="#111"/>
<path d="M9.5 661V676" stroke="#fff" stroke-width="2" stroke-linecap="round"/><path d="M11.0 662V677" stroke="#9c9cb6" stroke-width="1"/>
<path d="M311.5 661V676" stroke="#fff" stroke-width="2" stroke-linecap="round"/><path d="M313.0 662V677" stroke="#9c9cb6" stroke-width="1"/>
<path d="M494.5 661V676" stroke="#fff" stroke-width="2" stroke-linecap="round"/><path d="M496.0 662V677" stroke="#9c9cb6" stroke-width="1"/>
<path d="M688.5 661V676" stroke="#fff" stroke-width="2" stroke-linecap="round"/><path d="M690.0 662V677" stroke="#9c9cb6" stroke-width="1"/>
<path d="M874.5 661V676" stroke="#fff" stroke-width="2" stroke-linecap="round"/><path d="M876.0 662V677" stroke="#9c9cb6" stroke-width="1"/>
<path d="M921.5 661V676" stroke="#fff" stroke-width="2" stroke-linecap="round"/><path d="M923.0 662V677" stroke="#9c9cb6" stroke-width="1"/>
<path d="M1101.5 661V676" stroke="#fff" stroke-width="2" stroke-linecap="round"/><path d="M1103.0 662V677" stroke="#9c9cb6" stroke-width="1"/>
<path d="M1150.5 661V676" stroke="#fff" stroke-width="2" stroke-linecap="round"/><path d="M1152.0 662V677" stroke="#9c9cb6" stroke-width="1"/>
<path d="M727 659V692" stroke="#9a9ab4" stroke-width="1"/><path d="M728.2 659V692" stroke="#f4f4fc" stroke-width="1.4"/>
<path d="M791 659V692" stroke="#9a9ab4" stroke-width="1"/><path d="M792.2 659V692" stroke="#f4f4fc" stroke-width="1.4"/>
<path d="M826 659V692" stroke="#9a9ab4" stroke-width="1"/><path d="M827.2 659V692" stroke="#f4f4fc" stroke-width="1.4"/>
<path d="M959 659V692" stroke="#9a9ab4" stroke-width="1"/><path d="M960.2 659V692" stroke="#f4f4fc" stroke-width="1.4"/>
<path d="M1051 659V692" stroke="#9a9ab4" stroke-width="1"/><path d="M1052.2 659V692" stroke="#f4f4fc" stroke-width="1.4"/>
<g transform="translate(23 667)" ><path d="M1 1H12L17 6V19H1Z" fill="#ffffc4" stroke="#222" stroke-width="1.100"/><path d="M12 1V6H17" fill="#fff" stroke="#222" stroke-width="1"/><path d="M2 19.800H17.500M17.800 7V19.500" stroke="#555" stroke-width="1"/></g>
<g transform="translate(48 667)" ><path d="M2 16V4H7L9 6H15V9" fill="#e8c428" stroke="#4a3c00" stroke-width="1.100"/><path d="M2 16L6 9H20L16 16Z" fill="#f4d440" stroke="#4a3c00" stroke-width="1.100"/><path d="M12 3C14 0 18 1 19 4" fill="none" stroke="#222" stroke-width="1.200"/><path d="M20.500 2L19.500 5.500L16.500 4" fill="none" stroke="#222" stroke-width="1.200"/></g>
<g transform="translate(77 667)" ><rect x="1" y="1" width="17" height="18" rx="1.500" fill="#c4c820" stroke="#111" stroke-width="1.400"/><rect x="4" y="1.500" width="11" height="8" fill="#fff" stroke="#444" stroke-width=".8"/><path d="M5 4H14M5 6.500H14" stroke="#9cb4d8" stroke-width="1"/><rect x="5" y="12.500" width="10" height="6.500" fill="#111"/><rect x="11.500" y="13.500" width="2.500" height="4.500" fill="#fff"/></g>
<g transform="translate(103 666)" ><path d="M6 9L10 1H20L17 9Z" fill="#fff" stroke="#444" stroke-width=".9"/><path d="M10 3.500H18M9 5.500H17.500M8.500 7.500H16.500" stroke="#3868d8" stroke-width="1.100"/><path d="M2 12L5 8.500H19L22 10V15L19 18H2Z" fill="#c8cc30" stroke="#333" stroke-width="1.100"/><path d="M2 12H19L22 10M19 12V18" fill="none" stroke="#333" stroke-width="1"/><path d="M3 18H19V20.500H3Z" fill="#e8e8a0" stroke="#333" stroke-width=".9"/><path d="M4 14.500H16" stroke="#707818" stroke-width="1.500"/></g>
<g transform="translate(133 666)" ><path d="M4 1L11 14M14 1L7 14" stroke="#a0a0b4" stroke-width="1.600" fill="none"/><circle cx="5" cy="17" r="2.800" fill="#d8d8e4" stroke="#a0a0b4" stroke-width="1.300"/><circle cx="13" cy="17" r="2.800" fill="#d8d8e4" stroke="#a0a0b4" stroke-width="1.300"/><path d="M5 2L12 15M15 2L8 15" stroke="#fff" stroke-width="1" opacity=".8"/></g>
<g transform="translate(160 666)" ><path d="M1 1H9L12 4V15H1Z" fill="#e4e4ee" stroke="#a0a0b4" stroke-width="1.100"/><path d="M8 6H16L19 9V20H8Z" fill="#eeeef6" stroke="#a0a0b4" stroke-width="1.100"/><path d="M3 5H8M3 8H7M3 11H7M10 11H17M10 14H17M10 17H17" stroke="#a0a0b4" stroke-width=".9"/><path d="M9 21H20V10" stroke="#fff" stroke-width="1" fill="none"/></g>
<g transform="translate(187 666)" ><rect x="1.500" y="4" width="16" height="15" rx="1.500" fill="#b4b45c" stroke="#333" stroke-width="1.200"/><path d="M6 4L9.500 1L13 4V6H6Z" fill="#f0d040" stroke="#333" stroke-width="1"/><rect x="3.500" y="7" width="12" height="10" fill="#9c9c48"/><path d="M10 11H17L20 14V21H10Z" fill="#fff" stroke="#222" stroke-width="1.100"/><path d="M12 15H18M12 18H18" stroke="#2838c0" stroke-width="1.500"/></g>
<g transform="translate(215 667)" ><path d="M2 10L9 3V7C16 6 20 10 19 17H14C15 13 13 11 9 12V16Z" fill="#38d090" stroke="#0c4830" stroke-width="1.200" stroke-linejoin="round"/></g>
<path d="M234.8 686.4h6.4l-3.2 3.6z" fill="#111"/>
<g transform="translate(246 667)" ><path d="M20 10L13 3V7C6 6 2 10 3 17H8C7 13 9 11 13 12V16Z" fill="#dcdce8" stroke="#a0a0b4" stroke-width="1.200" stroke-linejoin="round"/><path d="M4 18H8" stroke="#fff" stroke-width="1"/></g>
<path d="M264.8 686.4h6.4l-3.2 3.6z" fill="#111"/>
<g transform="translate(276 666)" ><path d="M2 2V16L5.500 13L8 19L10.500 18L8 12.500H12.500Z" fill="#f4ec60" stroke="#222" stroke-width="1" stroke-linejoin="round"/><text x="16" y="17" text-anchor="middle" font-family="Liberation Sans,sans-serif" font-weight="bold" font-size="21" fill="#101868" stroke="#101868" stroke-width=".5">?</text></g>
<text x="321.500" y="682.500" font-family="Liberation Serif,serif" font-style="italic" font-size="25" fill="#111" stroke="#111" stroke-width=".5">f</text><text x="330.500" y="685" font-family="Liberation Sans,sans-serif" font-weight="bold" font-size="9.500" fill="#111">(x)</text>
<g transform="translate(350 666)" ><path d="M10.500 1.500C16 1.500 20 4.500 20 8.500C20 12.500 16 15 10.500 15C9 15 8 14.800 7 14.500L1.500 19.500L3.500 13C2 12 1 10.500 1 8.500C1 4.500 5 1.500 10.500 1.500Z" fill="#fff" stroke="#111" stroke-width="1.500"/><path d="M5 6H16M4 8.500H17M5 11H15" stroke="#333" stroke-width="1" stroke-dasharray="2 1"/></g>
<g transform="translate(380 667)" ><rect x="2" y="1" width="7" height="9" rx="3.500" fill="none" stroke="#b8b8cc" stroke-width="1.800"/><rect x="2" y="8" width="7" height="9" rx="3.500" fill="none" stroke="#e8e8f4" stroke-width="1.800"/></g>
<g transform="translate(402 667)" ><rect x="0.500" y="0.500" width="16" height="16" fill="#fff" stroke="#111" stroke-width="1"/><rect x="0.500" y="0.500" width="16" height="4" fill="#1818c0"/><path d="M0.500 7.500H16.500M0.500 10.500H16.500M0.500 13.500H16.500M3.700 4V17M6.900 4V17M10.100 4V17M13.300 4V17" stroke="#111" stroke-width="1.100"/></g>
<path d="M419.8 686.4h6.4l-3.2 3.6z" fill="#111"/>
<g transform="translate(431 666)" ><path d="M5 9V5.500C5 0 14 0 14 5.500V9" fill="none" stroke="#333" stroke-width="2.400"/><path d="M5.500 9V5.500C5.500 1.500 13.500 1.500 13.500 5.500V9" fill="none" stroke="#c8c8c8" stroke-width="1"/><path d="M1.500 9.500L4 8H16L17.500 9.500V19L15 20.500H4L1.500 19Z" fill="#6c6c6c" stroke="#111" stroke-width="1.200"/><path d="M3 10H9.500V19.500H3Z" fill="#c4c4c4"/><path d="M11 11V19" stroke="#555" stroke-width="2"/><circle cx="11.500" cy="14" r="1.500" fill="#111"/></g>
<path d="M448.8 686.4h6.4l-3.2 3.6z" fill="#111"/>
<g transform="translate(459 666)" ><rect x="1" y="1" width="8" height="8" fill="#38b0a0" stroke="#185890" stroke-width="1.200"/><rect x="1" y="11" width="8" height="8" fill="#38b0a0" stroke="#185890" stroke-width="1.200"/><path d="M2.500 3H7.500M2.500 13H7.500" stroke="#e8e040" stroke-width="1.400"/><path d="M1 21.500H9" stroke="#333" stroke-width="1" stroke-dasharray="1.500 1"/><path d="M11 1C14 1 12 9 15 10.500C12 12 14 20 11 20" fill="none" stroke="#111" stroke-width="1.300"/><path d="M16.500 9H21M16.500 12H21" stroke="#111" stroke-width="1.300"/></g>
<g transform="translate(506 667)" ><rect x="1" y="1" width="19" height="17" fill="#f4f478" stroke="#30c8d8" stroke-width="1.500"/><path d="M3 9.500H18M10.500 3V16" stroke="#111" stroke-width="1.400"/><path d="M2.500 9.500L6 7V12ZM18.500 9.500L15 7V12ZM10.500 2.500L8 6H13ZM10.500 16.500L8 13H13Z" fill="#111"/></g>
<g transform="translate(535 666)" ><path d="M2 10H18M10 2V19" stroke="#102068" stroke-width="2"/><path d="M0.500 10L5 6V14ZM19.500 10L15 6V14ZM10 0.500L6 5H14ZM10 20.500L6 16H14Z" fill="#102068"/><circle cx="10" cy="10" r="2.200" fill="#3858b8" stroke="#102068"/></g>
<g transform="translate(562 666)" ><path d="M11.500 11.500L19.500 20" stroke="#111" stroke-width="3.400" stroke-linecap="round"/><path d="M11.500 11.500L19.500 20" stroke="#a8d8f0" stroke-width="1.400" stroke-linecap="round"/><circle cx="7.500" cy="7.500" r="6" fill="#e8f6ff" stroke="#111" stroke-width="1.500"/><path d="M4.500 7.500H10.500M7.500 4.500V10.500" stroke="#111" stroke-width="2"/></g>
<g transform="translate(590 666)" ><path d="M11.500 11.500L19.500 20" stroke="#111" stroke-width="3.400" stroke-linecap="round"/><path d="M11.500 11.500L19.500 20" stroke="#a8d8f0" stroke-width="1.400" stroke-linecap="round"/><circle cx="7.500" cy="7.500" r="6" fill="#e8f6ff" stroke="#111" stroke-width="1.500"/><path d="M4.500 7.500H10.500" stroke="#111" stroke-width="2"/></g>
<g transform="translate(619 667)" ><rect x="0.500" y="0.500" width="18" height="18" fill="#60d0f0" stroke="#183060" stroke-width="1.200"/><path d="M5 4L10 2L16 4L11 7Z" fill="#f0e890" stroke="#555" stroke-width=".8"/><path d="M3 12L8 8L14 10L9 15Z" fill="#fff" stroke="#222" stroke-width=".9"/><path d="M9 15L14 10L16 12L11 17Z" fill="#1c3c90" stroke="#222" stroke-width=".8"/><path d="M3 12L5 15L9 15" fill="#f0e890" stroke="#222" stroke-width=".8"/></g>
<g transform="translate(646 667)" ><rect x="0.500" y="0.500" width="18" height="18" fill="#60d0f0" stroke="#183060" stroke-width="1.200"/><path d="M4 11L9 7L15 9L10 14Z" fill="#fff" stroke="#222" stroke-width=".9"/><path d="M10 14L15 9L16.500 11L11.500 16Z" fill="#1c3c90" stroke="#222" stroke-width=".8"/><path d="M4 11L5.500 14L10 14" fill="#f0e890" stroke="#222" stroke-width=".8"/></g>
<g transform="translate(700 667)" ><path d="M3 0V20M8 0V20M13 0V20M18 0V20M0 3H21M0 8H21M0 13H21M0 18H21" stroke="#2c6cd4" stroke-width="1.150"/><path d="M8 4.500L11.500 8L8 11.500L4.500 8Z" fill="#f8c020" stroke="#d03010" stroke-width="1"/></g>
<g transform="translate(737 667)" ><path d="M1 4H14V19H1Z" fill="#f8b070" stroke="#f08424" stroke-width="1.800"/><path d="M1 7H14" stroke="#fff" stroke-width="1"/><path d="M16 8H21M16 19H21M18.500 8V19" stroke="#f08424" stroke-width="1.600"/><path d="M4 14L7 17L13 9" fill="none" stroke="#f08424" stroke-width="1.800"/><path d="M1 20H21" stroke="#f08424" stroke-width="1.500"/></g>
<g transform="translate(765 667)" ><path d="M5 1H14V9H5Z" fill="#fcd8b0" stroke="#f08424" stroke-width="1.200"/><path d="M1 5H9V11H1Z" fill="#f8c898" stroke="#f08424" stroke-width="1.200"/><path d="M10 8L19 3L20.500 5.500L12 10.500Z" fill="#f8a050" stroke="#f08424" stroke-width="1"/><path d="M4 14L8 19L18 9" fill="none" stroke="#f08424" stroke-width="2.200"/></g>
<g transform="translate(800 667)" ><path d="M2 0V13M16 0V13M3 3.500H15M3 9.500H15" stroke="#111" stroke-width="1.200"/><path d="M2 3.500L6 1.500V5.500ZM2 9.500L6 7.500V11.500Z" fill="#111"/><path d="M1 13.500H17" stroke="#111" stroke-width="1"/><path d="M1 19L5 14M5 19L9 14M9 19L13 14M13 19L17 14" stroke="#111" stroke-width="1.300"/><path d="M12 2V15L15 12.500L17.500 18L20 17L17.500 11.500H22Z" fill="#f4ec40" stroke="#8c8400" stroke-width=".8"/></g>
<g transform="translate(835 666)" ><path d="M1 2H14V18H1Z" fill="#fff" stroke="#111" stroke-width="1.400"/><path d="M8 6C5 8 5 12 8 14" fill="none" stroke="#111" stroke-width="1.200"/><path d="M11 1H19L21 18H11Z" fill="#888" stroke="#222" stroke-width="1"/><circle cx="15.500" cy="4.500" r="2.400" fill="#a01818"/><circle cx="15.500" cy="10" r="2.400" fill="#f0e020"/><circle cx="15.500" cy="15.500" r="2.400" fill="#20b8d0"/><path d="M1 19.500H21" stroke="#111" stroke-width="1.300"/></g>
<path d="M854.8 686.4h6.4l-3.2 3.6z" fill="#111"/>
<g transform="translate(886 666)" ><path d="M11 2C17 2 20 6 20 11C20 17 15 20 10 20C5 20 2 16 2 12C2 8 5 6 9 6C13 6 15 9 15 12C15 14 13 16 11 16" fill="none" stroke="#a8a8b4" stroke-width="2.600" stroke-linecap="round"/><path d="M12 3C17 3 19 7 19 11" fill="none" stroke="#e4e4ec" stroke-width="1"/></g>
<g transform="translate(935 667)" ><path d="M3 0V20M8 0V20M13 0V20M18 0V20M0 3H21M0 8H21M0 13H21M0 18H21" stroke="#f0903c" stroke-width="1.200"/></g>
<g transform="translate(969 666)" ><path d="M3 2V8M15 2V8M3 4.500H15" stroke="#f08424" stroke-width="1.600"/><rect x="3" y="8" width="12" height="11" fill="#f8b070" stroke="#f08424" stroke-width="1.500"/><path d="M17 8H22M17 19H22M19.500 8V19" stroke="#f08424" stroke-width="1.600"/><circle cx="4.500" cy="18" r="3.300" fill="#fff" stroke="#f08424" stroke-width="1.400"/><path d="M4.500 12V15" stroke="#f08424" stroke-width="1.500"/></g>
<g transform="translate(996 666)" ><rect x="3.500" y="1.500" width="17.500" height="17.500" fill="#fff" stroke="#1c48d0" stroke-width="2.200"/><path d="M12.200 1.500V19M3.500 10.200H21" stroke="#1c48d0" stroke-width="1.600"/><circle cx="8" cy="5.800" r="2.800" fill="#fff" stroke="#e02020" stroke-width="1.300" stroke-dasharray="1.800 1"/><circle cx="16.600" cy="5.800" r="2.800" fill="#fff" stroke="#1c48d0" stroke-width="1.300" stroke-dasharray="1.800 1"/><circle cx="16.600" cy="14.600" r="2.800" fill="#fff" stroke="#1c48d0" stroke-width="1.300" stroke-dasharray="1.800 1"/><rect x="13" y="11" width="2.500" height="2.500" fill="#1c48d0"/><path d="M9 18.500H15M9 12.500V8" stroke="#40c020" stroke-width="1" stroke-dasharray="1.500 1"/><circle cx="5" cy="16.500" r="3.600" fill="#f4ec20" stroke="#111" stroke-width="1.300"/><path d="M5 10V13" stroke="#111" stroke-width="2.400"/></g>
<g transform="translate(1024 665)" ><path d="M2 3H8V1H13V7H8V10H2Z" fill="#f4ec20" stroke="#111" stroke-width="1"/><rect x="9" y="6" width="9" height="13" rx="3" fill="#60d8e8" stroke="#111" stroke-width="1.400"/><path d="M5 21L20 7" stroke="#111" stroke-width="2"/><path d="M16 16L22 22" stroke="#1c48d0" stroke-width="2.600"/><path d="M11 9V13" stroke="#107040" stroke-width="1.500"/></g>
<g transform="translate(1062 666)" ><path d="M2 5V20M2 10H8" stroke="#f08424" stroke-width="1.700"/><path d="M9 10L5.500 7.500V12.500Z" fill="#f08424"/><path d="M9 3H19L21 12L19 16H9Z" fill="#f8a050" stroke="#f08424" stroke-width="1.400"/><path d="M11 6H14V13H11ZM16 6H18.500V13H16Z" fill="#fff"/><path d="M2 17H18M2 20H18" stroke="#f08424" stroke-width="1.300" stroke-dasharray="2 1"/></g>
<g transform="translate(1112 666)" ><path d="M2 11L12 2L21 6L11 16Z" fill="#fff" stroke="#1c48d0" stroke-width="1.500" stroke-linejoin="round"/><path d="M2 11V15L11 20L21 10V6" fill="#e0f0ff" stroke="#1c48d0" stroke-width="1.500" stroke-linejoin="round"/><path d="M2.500 13L11 18L20.500 8" fill="none" stroke="#40b0e8" stroke-width="1.200"/></g>
<g transform="translate(1161 665)" ><path d="M2 6H20" stroke="#1818a8" stroke-width="1.500"/><path d="M1 6L5.500 2.500M1 6L5.500 9.500M21 6L16.500 2.500M21 6L16.500 9.500" stroke="#1818a8" stroke-width="1.500" fill="none"/><rect x="1" y="12.500" width="20" height="6" fill="#f8e8c0" stroke="#1c48d0" stroke-width="1.200"/><path d="M4 13V16M7 13V15M10 13V16M13 13V15M16 13V16M19 13V15" stroke="#e02020" stroke-width="1"/></g>
<g transform="translate(1190 665)" ><path d="M5 2H17V20H11V23H15V24H9V17H12V5H5Z" fill="#444" stroke="#111" stroke-width="1"/><circle cx="6.500" cy="10" r="4" fill="#40b878" stroke="#185838" stroke-width="1"/><circle cx="5.500" cy="9" r="1.300" fill="#c8f0d8"/><path d="M2 14H9V16H2Z" fill="#333"/></g>
<g transform="translate(1226 656)" ><path d="M12 3C16 0 20 1 19 4C18 6 15 7 13 7C17 7 19 9 17 12" fill="none" stroke="#e03828" stroke-width="1.600"/><path d="M5 23L9 12C13 11 18 13 16 18C14 22 9 23 3 21" fill="none" stroke="#3838a8" stroke-width="1.700"/><path d="M26 9C22 7 18 9 20 12C22 15 25 16 22 19C20 21 16 20 15 19" fill="none" stroke="#f08020" stroke-width="1.700"/><text x="10" y="32" font-family="Liberation Sans,sans-serif" font-weight="bold" font-style="italic" font-size="10.400" fill="#3838a8" letter-spacing="-.2">CATIA</text></g>
<rect x="1208" y="696" width="29" height="19" fill="#dcdcec"/>
<rect x="1216.500" y="701.500" width="8" height="7" fill="#e8e8f0" stroke="#a8a8bc" stroke-width="1"/><path d="M1219 711.500H1227.500V704" fill="none" stroke="#c4c4d4" stroke-width="1"/>
<path d="M1240 696V716" stroke="#9a9ab4" stroke-width="1"/><path d="M1241.2 696V716" stroke="#f4f4fc" stroke-width="1.4"/>
<rect x="1243" y="696" width="31" height="20" fill="#e4e4f0"/>
<circle cx="1256.500" cy="704.500" r="5.200" fill="#fff" stroke="#111" stroke-width="1.400"/><circle cx="1256.500" cy="704.500" r="2.800" fill="#2878e0"/><text x="1256.500" y="707" text-anchor="middle" font-family="Liberation Serif,serif" font-weight="bold" font-size="7" fill="#fff">i</text><path d="M1264.500 699V711.500H1250" fill="none" stroke="#111" stroke-width="1.400"/><path d="M1250 712.500H1265" stroke="#888" stroke-width="1"/>
</svg>
<div class="a" style="left:1273.300px;top:2px;width:1.700px;height:716px;background:linear-gradient(#3c7cc8 0,#4a80c8 8%,#7c8cb8 14%,#8c94b2 100%)"></div>
</body></html>
